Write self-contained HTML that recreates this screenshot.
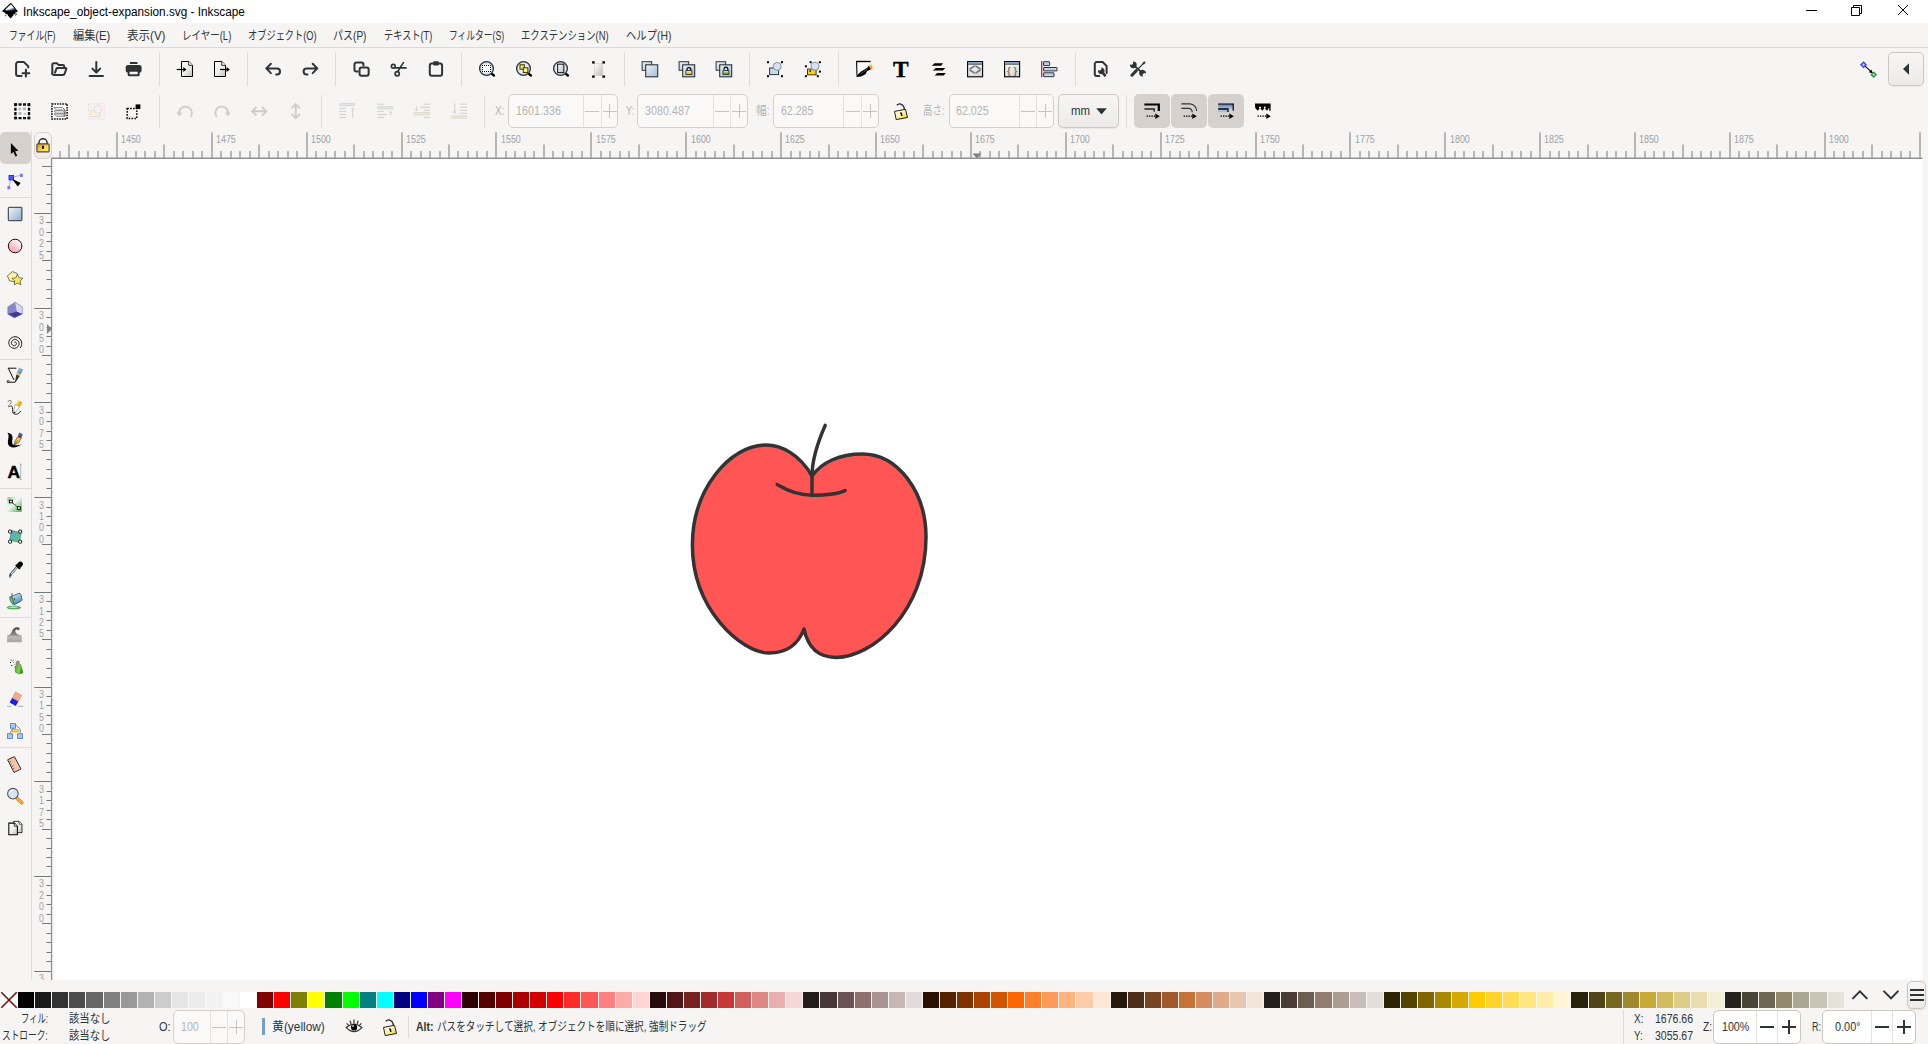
<!DOCTYPE html>
<html lang="ja"><head><meta charset="utf-8"><title>Inkscape_object-expansion.svg - Inkscape</title>
<style>
html,body{margin:0;padding:0}
body{width:1928px;height:1044px;overflow:hidden;position:relative;background:#f6f5f4;font-family:"Liberation Sans","Noto Sans CJK JP",sans-serif;font-size:12px;color:#2e3436}
body>div,body>span,body>svg{position:absolute}
.t{white-space:nowrap;transform-origin:0 50%;display:block}
.i{overflow:visible}
</style></head><body>
<div style="left:0.00px;top:0.00px;width:1928.00px;height:23.00px;background:#fff;"></div>
<svg class="i" style="left:1.90px;top:2.90px;" width="17" height="17" viewBox="0 0 18 18"><defs><linearGradient id="lg_ink" x1="0.35" y1="0.1" x2="0.75" y2="0.9"><stop offset="0" stop-color="#fff"/><stop offset="0.45" stop-color="#fff"/><stop offset="0.8" stop-color="#1d3a66"/><stop offset="1" stop-color="#000"/></linearGradient></defs><path d="M8.7 0.2 L0.4 8.3 Q-0.2 9.2 1.2 9.6 L3.6 10.2 Q2.2 11.2 4.4 11.7 L6.6 12.4 Q5.2 13.6 7.2 14.2 L8.6 15.9 Q9.1 16.4 9.7 15.9 L10.8 14.4 Q13 13.6 11.6 12.5 L13.2 11.9 Q15.4 11.2 13.8 10.2 L15.8 9.6 Q17.2 9.1 16.4 8.2 L9.9 0.3 Q9.2 -0.3 8.7 0.2Z" fill="#000"/><path d="M9.1 1.6 L3.3 7.2 L5.2 8.6 L6.6 7.6 L8 8.8 L9.6 7.7 L11.6 9.3 L15.2 8.1 L9.7 1.6Z" fill="url(#lg_ink)"/><ellipse cx="15" cy="11.6" rx="1.1" ry="0.55" fill="#000"/><ellipse cx="3.8" cy="13.6" rx="1" ry="0.5" fill="#000"/><ellipse cx="14.4" cy="13.5" rx="0.5" ry="0.45" fill="#000"/></svg>
<span class="t" id="t1" style="left:23.00px;top:2.80px;font-size:12px;line-height:18px;height:18px;color:#000;transform:scaleX(0.9808);">Inkscape_object-expansion.svg - Inkscape</span>
<svg class="i" style="left:1800px;top:0" width="128" height="23" viewBox="0 0 128 23"><path d="M6 10.5h11" stroke="#000" stroke-width="1" fill="none"/><path d="M51.5 7.5h8v8h-8z M53.5 7.5v-2h8v8h-2" stroke="#000" stroke-width="1" fill="none"/><path d="M98 5l10 10M108 5l-10 10" stroke="#000" stroke-width="1" fill="none"/></svg>
<div style="left:0.00px;top:47.00px;width:1928.00px;height:1.00px;background:#dcd9d6;"></div>
<span class="t" id="t2" style="left:8.80px;top:26.50px;font-size:12px;line-height:18px;height:18px;color:#2e3436;transform:scaleX(0.7343);">ファイル(F)</span>
<span class="t" id="t3" style="left:72.80px;top:26.50px;font-size:12px;line-height:18px;height:18px;color:#2e3436;transform:scaleX(0.9300);">編集(E)</span>
<span class="t" id="t4" style="left:126.80px;top:26.50px;font-size:12px;line-height:18px;height:18px;color:#2e3436;transform:scaleX(0.9600);">表示(V)</span>
<span class="t" id="t5" style="left:182.00px;top:26.50px;font-size:12px;line-height:18px;height:18px;color:#2e3436;transform:scaleX(0.7912);">レイヤー(L)</span>
<span class="t" id="t6" style="left:248.00px;top:26.50px;font-size:12px;line-height:18px;height:18px;color:#2e3436;transform:scaleX(0.7680);">オブジェクト(O)</span>
<span class="t" id="t7" style="left:333.30px;top:26.50px;font-size:12px;line-height:18px;height:18px;color:#2e3436;transform:scaleX(0.8350);">パス(P)</span>
<span class="t" id="t8" style="left:383.80px;top:26.50px;font-size:12px;line-height:18px;height:18px;color:#2e3436;transform:scaleX(0.7670);">テキスト(T)</span>
<span class="t" id="t9" style="left:449.20px;top:26.50px;font-size:12px;line-height:18px;height:18px;color:#2e3436;transform:scaleX(0.7286);">フィルター(S)</span>
<span class="t" id="t10" style="left:521.40px;top:26.50px;font-size:12px;line-height:18px;height:18px;color:#2e3436;transform:scaleX(0.7791);">エクステンション(N)</span>
<span class="t" id="t11" style="left:625.60px;top:26.50px;font-size:12px;line-height:18px;height:18px;color:#2e3436;transform:scaleX(0.8619);">ヘルプ(H)</span>
<svg class="i" style="left:15.00px;top:61.00px;" width="16" height="16" viewBox="0 0 16 16"><g fill="none" stroke="#2e3436" stroke-width="2" stroke-linecap="round" stroke-linejoin="round"><path d="M6.5 15H3.1a2 2 0 0 1-2-2V3.1a2 2 0 0 1 2-2H9L13.2 5.3V6.6"/><path d="M10.9 8.8V15.6M7.5 12.3h6.8"/></g></svg>
<svg class="i" style="left:51.50px;top:61.00px;" width="16" height="16" viewBox="0 0 16 16"><g fill="none" stroke="#2e3436" stroke-width="2" stroke-linecap="round" stroke-linejoin="round" stroke-width="1.9" transform="translate(-0.9 0)"><path d="M1.2 12.6V3.6a1.4 1.4 0 0 1 1.4-1.4h3.2l1.6 1.7h4.3a1.4 1.4 0 0 1 1.4 1.4V6"/><path d="M3.9 11.6l1.5-3.9a1 1 0 0 1 .95-.65h8a.85.85 0 0 1 .8 1.15l-1.7 4.75a1.6 1.6 0 0 1-1.5 1.05H2.7a1.5 1.5 0 0 1-1.5-1.5"/></g></svg>
<svg class="i" style="left:88.50px;top:61.00px;" width="16" height="16" viewBox="0 0 16 16"><g fill="none" stroke="#2e3436" stroke-width="2" stroke-linecap="round" stroke-linejoin="round" stroke-width="1.8"><path d="M7.3 0.9V11.2M3.4 7.6l3.9 3.9 3.9-3.9M0.6 15h13.4"/></g></svg>
<svg class="i" style="left:125.50px;top:61.00px;" width="16" height="16" viewBox="0 0 16 16"><g fill="#2e3436"><rect x="3.7" y="1.1" width="8" height="1.9" rx="0.9"/><rect x="-0.3" y="4" width="15.9" height="7.6" rx="2.2"/><rect x="1.7" y="9.5" width="12" height="5.8" rx="1.6"/><rect x="3.6" y="10.7" width="8.1" height="2.6" rx="0.3" fill="#f6f5f4"/></g></svg>
<div style="left:158.80px;top:52.00px;width:1.00px;height:34.00px;background:#dedbd8;"></div>
<svg class="i" style="left:177.00px;top:61.00px;" width="16" height="16" viewBox="0 0 16 16"><defs><linearGradient id="lg_doc" x1="0" y1="0" x2="1" y2="1"><stop offset="0" stop-color="#fff"/><stop offset="0.5" stop-color="#eeeeec"/><stop offset="1" stop-color="#c4c4bc"/></linearGradient></defs><path d="M4.5 0.5h7.3l3.7 3.7v11.3h-11z" fill="url(#lg_doc)" stroke="#000"/><path d="M11.7 0.6v3.7h3.7" fill="#fff" stroke="#000" stroke-width="0.8"/><path d="M-0.3 8.5H7" stroke="#000" stroke-width="1.2"/><path d="M6.3 6v5l3.2-2.5z" fill="#000"/></svg>
<svg class="i" style="left:214.00px;top:61.00px;" width="16" height="16" viewBox="0 0 16 16"><path d="M0.5 0.5h7.3l3.7 3.7v11.3h-11z" fill="url(#lg_doc)" stroke="#000"/><path d="M7.7 0.6v3.7h3.7" fill="#fff" stroke="#000" stroke-width="0.8"/><path d="M6 8.5H13.2" stroke="#000" stroke-width="1.2"/><path d="M12.6 6v5l3.3-2.5z" fill="#000"/></svg>
<div style="left:246.90px;top:52.00px;width:1.00px;height:34.00px;background:#dedbd8;"></div>
<svg class="i" style="left:265.00px;top:61.00px;" width="16" height="16" viewBox="0 0 16 16"><g fill="none" stroke="#2e3436" stroke-width="2" stroke-linecap="round" stroke-linejoin="round"><path d="M5.9 2.7L1.3 7.4l4.6 4.7M1.6 7.4H12a3 3 0 0 1 0 6h-.9"/></g></svg>
<svg class="i" style="left:302.30px;top:61.00px;" width="16" height="16" viewBox="0 0 16 16"><g fill="none" stroke="#2e3436" stroke-width="2" stroke-linecap="round" stroke-linejoin="round" transform="translate(-0.9 0)"><path d="M11.6 2.7l4.6 4.7-4.6 4.7M15.9 7.4H5.5a3 3 0 0 0 0 6h.9"/></g></svg>
<div style="left:335.30px;top:52.00px;width:1.00px;height:34.00px;background:#dedbd8;"></div>
<svg class="i" style="left:353.50px;top:61.00px;" width="16" height="16" viewBox="0 0 16 16"><g fill="none" stroke="#2e3436" stroke-width="2" stroke-linecap="round" stroke-linejoin="round" transform="translate(-0.85 0)"><path d="M10.3 4.6V3.4a2 2 0 0 0-2-2H3.3a2 2 0 0 0-2 2v5a2 2 0 0 0 2 2h1.2"/><rect x="6.4" y="6.5" width="9.1" height="8.2" rx="2"/></g></svg>
<svg class="i" style="left:390.50px;top:61.00px;" width="16" height="16" viewBox="0 0 16 16"><g fill="none" stroke="#2e3436" stroke-linecap="round" transform="translate(-0.9 0)"><circle cx="3.2" cy="5.3" r="1.9" stroke-width="1.7"/><circle cx="7.1" cy="12.7" r="2.1" stroke-width="1.7"/><path d="M4.8 6.9H16" stroke-width="1.6"/><path d="M7.6 10.5L13.3 1.6" stroke-width="1.6"/></g></svg>
<svg class="i" style="left:427.60px;top:61.00px;" width="16" height="16" viewBox="0 0 16 16"><g><rect x="1.8" y="2.4" width="12.3" height="12.3" rx="2" fill="none" stroke="#2e3436" stroke-width="2" stroke-linecap="round" stroke-linejoin="round"/><rect x="5" y="0.3" width="5.9" height="4.1" rx="1.1" fill="#2e3436"/></g></svg>
<div style="left:461.10px;top:52.00px;width:1.00px;height:34.00px;background:#dedbd8;"></div>
<svg class="i" style="left:479.00px;top:61.00px;" width="16" height="16" viewBox="0 0 16 16"><defs><radialGradient id="lg_lens" cx="0.5" cy="0.5" r="0.5"><stop offset="0" stop-color="#fff"/><stop offset="0.7" stop-color="#e4edf7"/><stop offset="1" stop-color="#a9c2df"/></radialGradient><linearGradient id="lg_gray" x1="0" y1="0" x2="1" y2="1"><stop offset="0" stop-color="#fff"/><stop offset="1" stop-color="#bdbdb8"/></linearGradient></defs><path d="M12.6 12.6l2.3 1.9" stroke="#000" stroke-width="2.4" stroke-linecap="round"/><circle cx="7.5" cy="7.5" r="6.9" fill="url(#lg_lens)" stroke="#2e3436" stroke-width="1.3"/><rect x="3" y="4" width="9" height="7" fill="#fff"/><path d="M3 4.500h9M3 10.500h9M3.500 4v7M11.500 4v7" stroke="#000" stroke-width="1" stroke-dasharray="1 1" fill="none"/></svg>
<svg class="i" style="left:516.00px;top:61.00px;" width="16" height="16" viewBox="0 0 16 16"><path d="M12.6 12.6l2.3 1.9" stroke="#000" stroke-width="2.4" stroke-linecap="round"/><circle cx="7.5" cy="7.5" r="6.9" fill="url(#lg_lens)" stroke="#2e3436" stroke-width="1.3"/><rect x="4" y="3.8" width="4.4" height="4.4" fill="#fce94f" stroke="#3c3000" stroke-width="1"/><rect x="7.3" y="6.8" width="4.6" height="4.8" fill="#fce94f" stroke="#3c3000" stroke-width="1"/><rect x="8.3" y="7.8" width="2" height="2.4" fill="#fff8b0"/></svg>
<svg class="i" style="left:553.00px;top:61.00px;" width="16" height="16" viewBox="0 0 16 16"><path d="M12.6 12.6l2.3 1.9" stroke="#000" stroke-width="2.4" stroke-linecap="round"/><circle cx="7.5" cy="7.5" r="6.9" fill="url(#lg_lens)" stroke="#2e3436" stroke-width="1.3"/><rect x="4.6" y="3.2" width="6.2" height="8.4" fill="url(#lg_gray)" stroke="#222" stroke-width="1.1"/></svg>
<svg class="i" style="left:590.50px;top:61.00px;" width="16" height="16" viewBox="0 0 16 16"><g transform="translate(-0.9 0)"><rect x="4.3" y="2.4" width="8.2" height="12.2" fill="url(#lg_gray)" stroke="#ccc" stroke-width="0.6"/><g fill="#111"><rect x="2" y="0.2" width="2.6" height="2.4"/><rect x="12.3" y="0.2" width="2.6" height="2.4"/><rect x="2" y="14.4" width="2.6" height="2.4"/><rect x="12.3" y="14.4" width="2.6" height="2.4"/></g></g></svg>
<div style="left:623.70px;top:52.00px;width:1.00px;height:34.00px;background:#dedbd8;"></div>
<svg class="i" style="left:641.60px;top:61.00px;" width="16" height="16" viewBox="0 0 16 16"><defs><linearGradient id="lg_blue" x1="0" y1="0" x2="1" y2="1"><stop offset="0" stop-color="#eef3fa"/><stop offset="1" stop-color="#a4bddb"/></linearGradient><linearGradient id="lg_gold" x1="0" y1="0" x2="0" y2="1"><stop offset="0" stop-color="#fff3a0"/><stop offset="1" stop-color="#f0a513"/></linearGradient><linearGradient id="lg_green" x1="0" y1="0" x2="0" y2="1"><stop offset="0" stop-color="#d8f0b0"/><stop offset="1" stop-color="#4e9a06"/></linearGradient></defs><rect x="0.1" y="0.7" width="9.6" height="8.6" fill="url(#lg_blue)" stroke="#2e3436"/><rect x="3.700" y="3.800" width="12" height="12" fill="url(#lg_blue)" stroke="#2e3436" stroke-width="1.1"/></svg>
<svg class="i" style="left:678.80px;top:61.00px;" width="16" height="16" viewBox="0 0 16 16"><rect x="0.1" y="0.7" width="9.6" height="8.6" fill="url(#lg_blue)" stroke="#2e3436"/><rect x="3.700" y="3.800" width="12" height="12" fill="url(#lg_blue)" stroke="#2e3436" stroke-width="1.1"/><path d="M8 10V8.6a1.9 1.9 0 0 1 3.8 0V10" fill="none" stroke="#000" stroke-width="1.2"/><rect x="6.9" y="9.6" width="6" height="3.8" fill="url(#lg_gold)" stroke="#222" stroke-width="0.8"/></svg>
<svg class="i" style="left:716.00px;top:61.00px;" width="16" height="16" viewBox="0 0 16 16"><rect x="0.1" y="0.7" width="9.6" height="8.6" fill="url(#lg_blue)" stroke="#2e3436"/><rect x="3.700" y="3.800" width="12" height="12" fill="url(#lg_blue)" stroke="#2e3436" stroke-width="1.1"/><path d="M8 8.800V8a1.9 1.9 0 0 1 3.8 0V10" fill="none" stroke="#000" stroke-width="1.2"/><rect x="6.9" y="9.6" width="6" height="3.8" fill="url(#lg_green)" stroke="#222" stroke-width="0.8"/></svg>
<div style="left:749.20px;top:52.00px;width:1.00px;height:34.00px;background:#dedbd8;"></div>
<svg class="i" style="left:767.00px;top:61.00px;" width="16" height="16" viewBox="0 0 16 16"><rect x="2.6" y="7" width="9" height="6.6" fill="#c9d9ec" stroke="#2e3436"/><circle cx="10.2" cy="5.4" r="4" fill="#d6e2f0" stroke="#7a8794" stroke-width="0.9"/><g fill="#000"><rect x="0.0" y="0.2" width="2" height="2"/><rect x="14.0" y="0.2" width="2" height="2"/><rect x="0.0" y="14.2" width="2" height="2"/><rect x="14.0" y="14.2" width="2" height="2"/></g></svg>
<svg class="i" style="left:804.50px;top:61.00px;" width="16" height="16" viewBox="0 0 16 16"><rect x="2.5" y="8" width="8.6" height="5.8" fill="#f5c938" stroke="#4a3b00"/><rect x="4.4" y="9.4" width="1.6" height="1.4" fill="#000"/><circle cx="10" cy="5.3" r="4" fill="#d6e2f0" stroke="#7a8794" stroke-width="0.9"/><g fill="#000"><rect x="-0.1" y="4.3" width="2" height="2"/><rect x="4.6" y="0.2" width="2" height="2"/><rect x="13.9" y="0.2" width="2" height="2"/><rect x="13.9" y="9.6" width="2" height="2"/><rect x="-0.1" y="14.2" width="2" height="2"/><rect x="11.8" y="14.2" width="2" height="2"/></g></svg>
<div style="left:837.90px;top:52.00px;width:1.00px;height:34.00px;background:#dedbd8;"></div>
<svg class="i" style="left:855.80px;top:61.00px;" width="16" height="16" viewBox="0 0 16 16"><defs><linearGradient id="lg_fs" x1="0" y1="0" x2="0" y2="1"><stop offset="0" stop-color="#fce94f"/><stop offset="1" stop-color="#f57900"/></linearGradient></defs><path d="M0.700 0.600H14L12 5 5 9.600 1 14.600z" fill="#fff"/><path d="M0 0.500H14.600" stroke="#000" stroke-width="1.400"/><path d="M0.600 0.300L1 14.800" stroke="#000" stroke-width="1.100"/><path d="M0 15.900L2.400 13 5.400 10.300 9 8.300 11.800 6.200 13 4.200 15 8.200 11.200 10 9.400 13.200 5 15.500z" fill="#000"/><path d="M4.600 13.200L11.400 8" stroke="#666" stroke-width="0.800"/><path d="M12.900 5L16.300 2.200V8.400L14.700 8.300z" fill="url(#lg_fs)"/></svg>
<svg class="i" style="left:892.70px;top:61.00px;" width="16" height="16" viewBox="0 0 16 16"><text x="7.900" y="15.700" text-anchor="middle" font-family="Liberation Serif,serif" font-weight="bold" font-size="23.400" fill="#000" stroke="#000" stroke-width="0.350">T</text></svg>
<svg class="i" style="left:930.00px;top:61.00px;" width="16" height="16" viewBox="0 0 16 16"><g fill="#000"><path d="M4.5 2.2h8.6l-2 2.6H1.8z"/><path d="M5.7 6.9h9.6l-2.4 2.6H2.8z"/><path d="M7.4 12h8.4l-2 2.6H4.6z"/></g></svg>
<svg class="i" style="left:967.00px;top:61.00px;" width="16" height="16" viewBox="0 0 16 16"><defs><linearGradient id="lg_win" x1="0" y1="0" x2="0.6" y2="1"><stop offset="0" stop-color="#fff"/><stop offset="1" stop-color="#d9d9d2"/></linearGradient></defs><rect x="0.6" y="0.6" width="15" height="15.2" fill="url(#lg_win)" stroke="#000" stroke-width="1.1"/><rect x="1.2" y="1.2" width="13.8" height="2" fill="#729fcf"/><path d="M1 3.4h14.4" stroke="#000" stroke-width="0.5"/><text x="8.1" y="13.2" text-anchor="middle" font-family="Liberation Sans,sans-serif" font-weight="bold" font-size="10.4" fill="#777" transform="matrix(1 0 0 1.5 0 -5.300)">&lt;&gt;</text></svg>
<svg class="i" style="left:1004.00px;top:61.00px;" width="16" height="16" viewBox="0 0 16 16"><rect x="0.6" y="0.6" width="15" height="15.2" fill="url(#lg_win)" stroke="#000" stroke-width="1.1"/><rect x="1.2" y="1.2" width="13.8" height="2" fill="#729fcf"/><path d="M1 3.4h14.4" stroke="#000" stroke-width="0.5"/><text x="8.1" y="12.6" text-anchor="middle" font-family="Liberation Sans,sans-serif" font-weight="bold" font-size="9.5" fill="#777">{ }</text></svg>
<svg class="i" style="left:1041.30px;top:61.00px;" width="16" height="16" viewBox="0 0 16 16"><path d="M0.7 0v16.2" stroke="#e01b24" stroke-width="1.3"/><rect x="2.6" y="0.7" width="6" height="3.9" rx="0.3" fill="#bcd2ec" stroke="#2e3436" stroke-width="1"/><rect x="2.6" y="6.5" width="13.4" height="3.4" rx="0.3" fill="#bcd2ec" stroke="#2e3436" stroke-width="1"/><rect x="2.6" y="11.8" width="10.4" height="3.9" rx="0.3" fill="#bcd2ec" stroke="#2e3436" stroke-width="1"/></svg>
<div style="left:1074.60px;top:52.00px;width:1.00px;height:34.00px;background:#dedbd8;"></div>
<svg class="i" style="left:1092.60px;top:61.00px;" width="16" height="16" viewBox="0 0 16 16"><g fill="none" stroke="#2e3436" stroke-width="2" stroke-linecap="round" stroke-linejoin="round" transform="translate(-0.4 0)"><path d="M6.6 15H4.2a2 2 0 0 1-2-2V3a2 2 0 0 1 2-2H10L14 5v7"/><path d="M10.300 12L13 15.200" stroke-width="2.700" stroke-linecap="butt"/><path d="M8.19 6.60A3.30 3.30 0 1 1 5.24 8.67A1.80 1.80 0 0 0 8.19 6.60Z" transform="translate(0.4 0)" fill="#2e3436" stroke="none"/></g></svg>
<svg class="i" style="left:1129.80px;top:61.00px;" width="16" height="16" viewBox="0 0 16 16"><g fill="none" stroke="#2e3436" stroke-linecap="round"><path d="M14 1.800L8 8" stroke-width="1.100"/><ellipse cx="13.900" cy="2" rx="1.800" ry="1.200" transform="rotate(-45 13.900 2)" fill="#2e3436" stroke="none"/><path d="M6.300 9.600L1.900 14.200" stroke-width="3"/><path d="M5 5.400L10.800 10.600" stroke-width="1.900" stroke-linecap="butt"/></g><path d="M2.65 0.46A3.40 3.40 0 1 1 -0.04 3.15A1.90 1.90 0 0 0 2.65 0.46Z" fill="#2e3436"/><path d="M13.15 15.44A3.40 3.40 0 1 1 15.84 12.75A1.90 1.90 0 0 0 13.15 15.44Z" fill="#2e3436"/></svg>
<svg class="i" style="left:1859.90px;top:60.50px;" width="16" height="16" viewBox="0 0 16 16"><path d="M4 4.2l8.6 7.6" stroke="#000" stroke-width="1.1"/><path d="M12.4 12.2l-3.6-1 2.6-2.8z" fill="#000"/><rect x="1.7" y="1.9" width="3.6" height="3.6" transform="rotate(45 3.5 3.7)" fill="#c8c8ff" stroke="#4040ff" stroke-width="1.4"/><rect x="12" y="12" width="3.4" height="3.4" transform="rotate(45 13.7 13.7)" fill="#c8c8ff" stroke="#2e9a2e" stroke-width="1.4"/></svg>
<div style="left:1887.80px;top:51.90px;width:35.80px;height:33.80px;border:1px solid #cdc7c2;border-radius:5px;box-sizing:border-box;background:linear-gradient(#f7f6f5,#edebe9);box-shadow:0 1px 1px rgba(0,0,0,.06);"></div>
<svg class="i" style="left:1902px;top:63px" width="8" height="12" viewBox="0 0 8 12"><path d="M7 0.3v11.4L1 6z" fill="#2e3436"/></svg>
<svg class="i" style="left:13.60px;top:103.00px;" width="16" height="16" viewBox="0 0 16 16"><rect x="0.4" y="0.4" width="15.6" height="15.800" fill="#fff"/><g stroke="#111" stroke-width="2.400" stroke-dasharray="3 1.330 3.100 1.330 3.100 1.330 3 50" fill="none"><path d="M0.200 1.500H16.200"/><path d="M0.200 15.100H16.200"/><path d="M1.400 0.300V16.300"/><path d="M15 0.300V16.300"/></g><g fill="#b9b9b9"><rect x="4.4" y="4.6" width="2.8" height="2.6"/><rect x="8.8" y="4.4" width="3.2" height="3"/><rect x="4.4" y="9" width="3.2" height="3"/><rect x="9.6" y="9.8" width="2.2" height="2"/></g></svg>
<svg class="i" style="left:50.50px;top:103.00px;" width="16" height="16" viewBox="0 0 16 16"><rect x="0.9" y="0.9" width="15.2" height="15" fill="#fff" stroke="#111" stroke-width="1.5" stroke-dasharray="1.6 1"/><g stroke="#555" stroke-width="0.7" fill="#eee"><path d="M3 10.8h8.6l2.4 2.4H5.4z"/><path d="M3 7.8h8.6l2.4 2.4H5.4z" fill="#fff"/><path d="M3 4.6h8.6l2.4 2.4H5.4z" fill="#fff"/><path d="M14 7v6.2" stroke="#444" stroke-width="1"/></g></svg>
<svg class="i" style="left:87.50px;top:103.00px;" width="16" height="16" viewBox="0 0 16 16"><rect x="0.8" y="0.8" width="15.4" height="15.2" fill="none" stroke="#f6c6c6" stroke-width="1" stroke-dasharray="1 1.4"/><rect x="3" y="7" width="9" height="6.6" fill="#fbf3d3" stroke="#dddddb"/><circle cx="10" cy="6.2" r="4" fill="#f0f2f5" stroke="#dcdcda" stroke-width="0.9"/></svg>
<svg class="i" style="left:124.70px;top:103.00px;" width="16" height="16" viewBox="0 0 16 16"><rect x="2.2" y="5.4" width="9.6" height="10" fill="none" stroke="#111" stroke-width="1.5" stroke-dasharray="1.7 1.2"/><rect x="10.6" y="1.4" width="4.8" height="4.6" fill="#000"/></svg>
<div style="left:158.80px;top:94.50px;width:1.00px;height:33.50px;background:#dedbd8;"></div>
<svg class="i" style="left:176.60px;top:103.00px;" width="16" height="16" viewBox="0 0 16 16"><g fill="none" stroke="#cdcdcc" stroke-width="1.9"><path d="M2.100 10A6.400 6.400 0 1 1 13.600 13.900"/></g><path d="M-0.600 9.600h6l-3 3.700z" fill="#cdcdcc"/></svg>
<svg class="i" style="left:213.60px;top:103.00px;" width="16" height="16" viewBox="0 0 16 16"><g fill="none" stroke="#cdcdcc" stroke-width="1.9"><path d="M14.100 10A6.400 6.400 0 1 0 2.600 13.900"/></g><path d="M16.800 9.600h-6l3 3.700z" fill="#cdcdcc"/></svg>
<svg class="i" style="left:251.00px;top:103.00px;" width="16" height="16" viewBox="0 0 16 16"><g fill="none" stroke="#cdcdcc" stroke-width="1.9"><path d="M1.4 8.3h13.6M5.4 4L1.2 8.3l4.2 4.3M11 4l4.2 4.3-4.2 4.3"/></g></svg>
<svg class="i" style="left:288.30px;top:103.00px;" width="16" height="16" viewBox="0 0 16 16"><g fill="none" stroke="#cdcdcc" stroke-width="1.9"><path d="M7.7 1.4V15M3.5 5.4l4.2-4.2 4.2 4.2M3.5 11l4.2 4.2 4.2-4.2"/></g></svg>
<div style="left:320.80px;top:94.50px;width:1.00px;height:33.50px;background:#dedbd8;"></div>
<svg class="i" style="left:339.40px;top:103.00px;" width="16" height="16" viewBox="0 0 16 16"><rect x="0.4" y="0.5" width="15.4" height="2.2" rx="0.6" fill="#dfe6ee" stroke="#d4d4d2" stroke-width="0.8"/><path d="M0.3 5.4H7" stroke="#d4d4d2" stroke-width="1.2"/><path d="M0.3 8.4H7" stroke="#d4d4d2" stroke-width="1.2"/><path d="M0.3 11.5H7" stroke="#d4d4d2" stroke-width="1.2"/><path d="M0.3 14.5H7" stroke="#d4d4d2" stroke-width="1.2"/><path d="M13.6 6V15" stroke="#d4d4d2" stroke-width="1.2"/><path d="M11.6 6.6h4l-2-2.2z" fill="#d4d4d2"/></svg>
<svg class="i" style="left:376.50px;top:103.00px;" width="16" height="16" viewBox="0 0 16 16"><path d="M0.3 1.2H6.8" stroke="#d4d4d2" stroke-width="1.2"/><rect x="0.5" y="3.6" width="15.4" height="2.2" rx="0.6" fill="#dfe6ee" stroke="#d4d4d2" stroke-width="0.8"/><path d="M0.3 8.4H6.8" stroke="#d4d4d2" stroke-width="1.2"/><path d="M0.3 14.5H6.8" stroke="#d4d4d2" stroke-width="1.2"/><path d="M0.3 11.5H10" stroke="#d4d4d2" stroke-width="1.2"/><path d="M13.7 9v3.6" stroke="#d4d4d2" stroke-width="1.2"/><path d="M11.8 9.8h3.8l-1.9-2z" fill="#d4d4d2"/></svg>
<svg class="i" style="left:413.80px;top:103.00px;" width="16" height="16" viewBox="0 0 16 16"><path d="M9.4 1.2H16" stroke="#d4d4d2" stroke-width="1.2"/><path d="M9.4 7.4H16" stroke="#d4d4d2" stroke-width="1.2"/><path d="M9.4 14.5H16" stroke="#d4d4d2" stroke-width="1.2"/><path d="M6.2 4.3H16" stroke="#d4d4d2" stroke-width="1.2"/><rect x="0.4" y="9.5" width="15.4" height="2.4" rx="0.6" fill="#f3ead2" stroke="#d4d4d2" stroke-width="0.8"/><path d="M2.5 3.4v3.6" stroke="#d4d4d2" stroke-width="1.2"/><path d="M0.6 6.2h3.8l-1.9 2z" fill="#d4d4d2"/></svg>
<svg class="i" style="left:450.80px;top:103.00px;" width="16" height="16" viewBox="0 0 16 16"><path d="M9.2 1.2H16" stroke="#d4d4d2" stroke-width="1.2"/><path d="M9.2 4.3H16" stroke="#d4d4d2" stroke-width="1.2"/><path d="M9.2 7.4H16" stroke="#d4d4d2" stroke-width="1.2"/><path d="M9.2 10.4H16" stroke="#d4d4d2" stroke-width="1.2"/><rect x="0.4" y="12.8" width="15.4" height="2.4" rx="0.6" fill="#f3ead2" stroke="#d4d4d2" stroke-width="0.8"/><path d="M3.7 0.3V9" stroke="#d4d4d2" stroke-width="1.2"/><path d="M1.7 8.4h4l-2 2.4z" fill="#d4d4d2"/></svg>
<div style="left:484.10px;top:94.50px;width:1.00px;height:33.50px;background:#dedbd8;"></div>
<span class="t" id="t12" style="left:494.90px;top:102.00px;font-size:12px;line-height:18px;height:18px;color:#b4b5b4;transform:scaleX(0.8463);">X:</span>
<div style="left:507.90px;top:94.10px;width:110.60px;height:34.00px;border:1px solid #d5d0cc;border-radius:5px;box-sizing:border-box;background:#faf9f8;"></div>
<div style="left:583.20px;top:95.10px;width:1.00px;height:32.00px;background:#e3e0dd;"></div>
<div style="left:600.60px;top:95.10px;width:1.00px;height:32.00px;background:#e3e0dd;"></div>
<div style="left:585.40px;top:110.60px;width:14.00px;height:1.00px;background:#c3c4c3;"></div>
<div style="left:602.80px;top:110.60px;width:14.00px;height:1.00px;background:#c3c4c3;"></div>
<div style="left:609.30px;top:104.10px;width:1.00px;height:14.00px;background:#c3c4c3;"></div>
<span class="t" id="t13" style="left:515.60px;top:102.00px;font-size:12px;line-height:18px;height:18px;color:#b4b5b4;transform:scaleX(0.8969);">1601.336</span>
<span class="t" id="t14" style="left:626.00px;top:102.00px;font-size:12px;line-height:18px;height:18px;color:#b4b5b4;transform:scaleX(0.7485);">Y:</span>
<div style="left:637.30px;top:94.10px;width:110.50px;height:34.00px;border:1px solid #d5d0cc;border-radius:5px;box-sizing:border-box;background:#faf9f8;"></div>
<div style="left:713.10px;top:95.10px;width:1.00px;height:32.00px;background:#e3e0dd;"></div>
<div style="left:729.70px;top:95.10px;width:1.00px;height:32.00px;background:#e3e0dd;"></div>
<div style="left:714.90px;top:110.60px;width:14.00px;height:1.00px;background:#c3c4c3;"></div>
<div style="left:732.00px;top:110.60px;width:14.00px;height:1.00px;background:#c3c4c3;"></div>
<div style="left:738.50px;top:104.10px;width:1.00px;height:14.00px;background:#c3c4c3;"></div>
<span class="t" id="t15" style="left:645.10px;top:102.00px;font-size:12px;line-height:18px;height:18px;color:#b4b5b4;transform:scaleX(0.8969);">3080.487</span>
<span class="t" id="t16" style="left:755.80px;top:102.00px;font-size:12px;line-height:18px;height:18px;color:#b4b5b4;transform:scaleX(0.8994);">幅:</span>
<div style="left:772.90px;top:94.10px;width:106.00px;height:34.00px;border:1px solid #d5d0cc;border-radius:5px;box-sizing:border-box;background:#faf9f8;"></div>
<div style="left:843.30px;top:95.10px;width:1.00px;height:32.00px;background:#e3e0dd;"></div>
<div style="left:860.70px;top:95.10px;width:1.00px;height:32.00px;background:#e3e0dd;"></div>
<div style="left:845.50px;top:110.60px;width:14.00px;height:1.00px;background:#c3c4c3;"></div>
<div style="left:863.05px;top:110.60px;width:14.00px;height:1.00px;background:#c3c4c3;"></div>
<div style="left:869.55px;top:104.10px;width:1.00px;height:14.00px;background:#c3c4c3;"></div>
<span class="t" id="t17" style="left:780.70px;top:102.00px;font-size:12px;line-height:18px;height:18px;color:#b4b5b4;transform:scaleX(0.8800);">62.285</span>
<svg class="i" style="left:893.00px;top:103.30px;" width="16" height="16" viewBox="0 0 16 16"><defs><linearGradient id="lg_lk" x1="0" y1="0" x2="1" y2="1"><stop offset="0" stop-color="#fff"/><stop offset="0.45" stop-color="#fdf6b0"/><stop offset="1" stop-color="#e8c430"/></linearGradient></defs><path d="M3.800 2.300C6 0 9.800 0.600 11 4.400l0.400 2" fill="none" stroke="#222" stroke-width="1.3"/><path d="M1.500 8.400L12.500 6.300l2 8.200L3.200 16.600z" fill="url(#lg_lk)" stroke="#222" stroke-width="1"/><path d="M7.100 9.600a1.2 1.2 0 0 1 2 .9l.4 2.2-1.4.2-.4-2a1.2 1.2 0 0 1-.6-1.3z" fill="#000"/></svg>
<span class="t" id="t18" style="left:923.40px;top:102.00px;font-size:12px;line-height:18px;height:18px;color:#b4b5b4;transform:scaleX(0.7899);">高さ:</span>
<div style="left:948.90px;top:94.10px;width:104.90px;height:34.00px;border:1px solid #d5d0cc;border-radius:5px;box-sizing:border-box;background:#faf9f8;"></div>
<div style="left:1018.70px;top:95.10px;width:1.00px;height:32.00px;background:#e3e0dd;"></div>
<div style="left:1036.10px;top:95.10px;width:1.00px;height:32.00px;background:#e3e0dd;"></div>
<div style="left:1020.90px;top:110.60px;width:14.00px;height:1.00px;background:#c3c4c3;"></div>
<div style="left:1038.20px;top:110.60px;width:14.00px;height:1.00px;background:#c3c4c3;"></div>
<div style="left:1044.70px;top:104.10px;width:1.00px;height:14.00px;background:#c3c4c3;"></div>
<span class="t" id="t19" style="left:956.30px;top:102.00px;font-size:12px;line-height:18px;height:18px;color:#b4b5b4;transform:scaleX(0.8909);">62.025</span>
<div style="left:1058.10px;top:94.00px;width:60.80px;height:34.20px;border:1px solid #cdc7c2;border-radius:5px;box-sizing:border-box;background:linear-gradient(#f7f6f5,#edebe9);box-shadow:0 1px 1px rgba(0,0,0,.06);"></div>
<span class="t" id="t20" style="left:1070.70px;top:102.00px;font-size:12px;line-height:18px;height:18px;color:#2e3436;transform:scaleX(0.9550);">mm</span>
<svg class="i" style="left:1095.5px;top:108px" width="11" height="7" viewBox="0 0 11 7"><path d="M0.2 0.3h10.6L5.5 6.5z" fill="#2e3436"/></svg>
<div style="left:1125.80px;top:94.50px;width:1.00px;height:33.50px;background:#dedbd8;"></div>
<div style="left:1134.00px;top:94.10px;width:35.50px;height:34.00px;background:#d6d1cd;border-radius:5px;"></div>
<svg class="i" style="left:1143.75px;top:103.00px;" width="16" height="16" viewBox="0 0 16 16"><path d="M0.4 1.5H14.8V8" fill="none" stroke="#000" stroke-width="2.2"/><path d="M0.4 6H10.2V8.8" fill="none" stroke="#222" stroke-width="1.3"/><path d="M2.6 13.2h8.6" stroke="#000" stroke-width="1.3" stroke-dasharray="1.4 1"/><path d="M11.3 10.4v5.6l4.5-2.8z" fill="#000"/></svg>
<div style="left:1171.00px;top:94.10px;width:35.50px;height:34.00px;background:#d6d1cd;border-radius:5px;"></div>
<svg class="i" style="left:1180.75px;top:103.00px;" width="16" height="16" viewBox="0 0 16 16"><g fill="none" stroke="#333" stroke-width="1.2"><path d="M0.3 0.9H9a7 7 0 0 1 6.6 7.1"/><path d="M0.3 5.4H7.3a4 4 0 0 1 3.9 3.8"/></g><path d="M2.6 13.2h8.6" stroke="#000" stroke-width="1.3" stroke-dasharray="1.4 1"/><path d="M11.3 10.4v5.6l4.5-2.8z" fill="#000"/></svg>
<div style="left:1208.00px;top:94.10px;width:35.80px;height:34.00px;background:#d6d1cd;border-radius:5px;"></div>
<svg class="i" style="left:1217.90px;top:103.00px;" width="16" height="16" viewBox="0 0 16 16"><defs><linearGradient id="lg_trg" x1="0" y1="0" x2="0" y2="1"><stop offset="0" stop-color="#5a7fb0"/><stop offset="1" stop-color="#cfdff1"/></linearGradient></defs><path d="M0.2 1H15V7.6H10.4V5.8H0.2z" fill="url(#lg_trg)"/><path d="M0.2 6.2H9.6V9H0.2z" fill="#9fc0e6"/><path d="M0.2 1H15.2V7.8" fill="none" stroke="#000" stroke-width="1.2"/><path d="M0.2 6H10V9" fill="none" stroke="#000" stroke-width="1.3"/><path d="M2.6 13.2h8.6" stroke="#000" stroke-width="1.3" stroke-dasharray="1.4 1"/><path d="M11.3 10.4v5.6l4.5-2.8z" fill="#000"/></svg>
<svg class="i" style="left:1255.40px;top:103.00px;" width="16" height="16" viewBox="0 0 16 16"><path d="M0 0.6H15.6V7.8H14.2V4.4L12 7.8 9.6 5 7.4 7.8 5 5 2.8 7.8 0.2 5z" fill="#000"/><circle cx="5" cy="4.4" r="1" fill="#fff"/><circle cx="9.7" cy="4.4" r="1" fill="#fff"/><path d="M2.6 13.2h8.6" stroke="#000" stroke-width="1.3" stroke-dasharray="1.4 1"/><path d="M11.3 10.4v5.6l4.5-2.8z" fill="#000"/></svg>
<div style="left:31.00px;top:131.00px;width:1.00px;height:849.00px;background:#dedbd8;"></div>
<div style="left:0.00px;top:132.40px;width:30.50px;height:31.70px;background:#d6d1cd;border-radius:5px;"></div>
<svg class="i" style="left:7.00px;top:140.50px;" width="16" height="16" viewBox="0 0 16 16"><path d="M3.9 1.9v11.2l2.5-2.2 2.1 4.7 1.7-.8-2.1-4.6 3.2-.4z" fill="#000"/></svg>
<svg class="i" style="left:7.00px;top:173.00px;" width="16" height="16" viewBox="0 0 16 16"><path d="M4 4.6L14 2.2M4 4.6L2 14.4" stroke="#999" stroke-width="0.7" fill="none"/><path d="M4.6 5.4l9 4.6-2.8 3.6z" fill="#000"/><rect x="2" y="2.4" width="4.6" height="4.6" fill="#5555ff" stroke="#1a1aff" stroke-width="0.8"/><rect x="13" y="0.7" width="2.8" height="3.2" fill="#7777ff"/><rect x="0.4" y="13" width="2.8" height="3.2" fill="#7777ff"/></svg>
<div style="left:0.00px;top:197.00px;width:31.00px;height:1.00px;background:#dedbd8;"></div>
<svg class="i" style="left:7.00px;top:206.00px;" width="16" height="16" viewBox="0 0 16 16"><defs><linearGradient id="lg_tr" x1="0" y1="0" x2="1" y2="1"><stop offset="0" stop-color="#f4f7fb"/><stop offset="1" stop-color="#8fabcf"/></linearGradient></defs><rect x="1.3" y="1.3" width="13.6" height="13.4" rx="0.5" fill="url(#lg_tr)" stroke="#2e3436" stroke-width="1"/></svg>
<svg class="i" style="left:7.00px;top:238.00px;" width="16" height="16" viewBox="0 0 16 16"><defs><linearGradient id="lg_tc" x1="0.8" y1="0.1" x2="0.2" y2="0.9"><stop offset="0" stop-color="#fff"/><stop offset="1" stop-color="#ff9aa8"/></linearGradient></defs><circle cx="8.1" cy="8" r="6.8" fill="url(#lg_tc)" stroke="#111" stroke-width="1"/></svg>
<svg class="i" style="left:7.00px;top:270.50px;" width="16" height="16" viewBox="0 0 16 16"><path d="M5.4 0.6l4.6 1.8 1 4.4-3.2 3.8-5-.6L0.3 5z" fill="#fdf3a2" stroke="#555" stroke-width="0.8"/><path d="M10.6 3.4l1.6 3.4 3.7.5-2.7 2.7.7 3.8-3.4-1.8-3.4 1.8.7-3.8L5 7.3l3.8-.5z" fill="#fce94f" stroke="#555" stroke-width="0.8"/></svg>
<svg class="i" style="left:7.00px;top:301.70px;" width="16" height="16" viewBox="0 0 16 16"><path d="M8.100 0.200L15.300 4.900V12.100L7.500 15.800 0.800 12.100V4.900z" fill="#8686c8"/><path d="M8.100 0.200L15.300 4.900V12.100L9.900 9.800z" fill="#d9d9f3"/><path d="M0.800 12.100L9.900 9.800 15.300 12.100 7.500 15.800z" fill="#3c3c8e"/><path d="M8.100 0.200L15.300 4.900V12.100L7.500 15.800 0.800 12.100V4.900z" fill="none" stroke="#6a6ab0" stroke-width="0.5"/></svg>
<svg class="i" style="left:7.00px;top:335.00px;" width="16" height="16" viewBox="0 0 16 16"><path d="M7.12 7.44L7.23 7.30L7.38 7.18L7.55 7.08L7.75 7.02L7.97 6.99L8.20 7.01L8.44 7.07L8.67 7.18L8.89 7.34L9.08 7.54L9.24 7.78L9.36 8.06L9.43 8.37L9.44 8.70L9.40 9.04L9.29 9.37L9.12 9.69L8.88 9.99L8.59 10.25L8.25 10.45L7.86 10.60L7.44 10.68L7.01 10.69L6.56 10.62L6.13 10.47L5.71 10.24L5.34 9.93L5.01 9.55L4.75 9.12L4.56 8.63L4.46 8.10L4.45 7.55L4.54 7.00L4.73 6.46L5.01 5.95L5.39 5.49L5.85 5.09L6.38 4.77L6.97 4.54L7.60 4.41L8.26 4.40L8.92 4.49L9.57 4.71L10.18 5.04L10.73 5.48L11.21 6.01L11.60 6.63L11.88 7.32L12.04 8.06L12.07 8.83L11.96 9.60L11.73 10.36L11.36 11.07L10.86 11.72L10.25 12.29L9.55 12.74L8.76 13.08L7.92 13.28L7.04 13.33L6.16 13.23L5.29 12.98L4.47 12.57L3.72 12.03L3.07 11.35L2.53 10.56L2.13 9.69L1.89 8.74L1.81 7.75L1.90 6.76L2.16 5.78L2.59 4.85L3.18 3.99L3.92 3.24L4.78 2.63L5.75 2.16L6.80 1.86L7.89 1.75L9.00 1.82L10.10 2.08L11.14 2.54L12.10 3.17L12.95 3.96L13.65 4.90L14.19 5.95L14.55 7.10L14.71 8.30L14.66 9.52L14.40 10.73L13.93 11.89L13.27 12.96" fill="none" stroke="#111" stroke-width="1"/></svg>
<div style="left:0.00px;top:358.50px;width:31.00px;height:1.00px;background:#dedbd8;"></div>
<svg class="i" style="left:7.00px;top:367.00px;" width="16" height="16" viewBox="0 0 16 16"><defs><linearGradient id="lg_pb" x1="0" y1="0" x2="1" y2="1"><stop offset="0" stop-color="#b8dcf0"/><stop offset="1" stop-color="#2a6eae"/></linearGradient></defs><path d="M0.8 1.2H9.4M1.4 1.4L7 13M0.3 15.2H8.2Q9.4 13 11 10.800" fill="none" stroke="#111" stroke-width="1"/><rect x="0.2" y="13.8" width="1.8" height="1.8" fill="#fff" stroke="#111" stroke-width="0.7"/><path d="M11.8 0.4l4.2 2.200-2.400 5-3.800-1.800z" fill="url(#lg_pb)"/><path d="M9.800 5.800l3.800 1.800-.8 1.400-3.400-1.600z" fill="#f5c211"/><path d="M9.400 7.400l3.400 1.600-3.600 4.600-1.200 1z" fill="#2e3436"/></svg>
<svg class="i" style="left:7.00px;top:399.50px;" width="16" height="16" viewBox="0 0 16 16"><path d="M0.900 2.200C1.200 0 4.400 -0.200 4.300 1.900C4.200 3.800 1.300 5 1.500 6.800L4.600 5.800" fill="none" stroke="#555" stroke-width="0.800"/><path d="M4.400 5.800c2.400 1.600.2 5.800 2 7.600 1.600 1.600 5 1.200 7.400-2.400" fill="none" stroke="#222" stroke-width="1"/><path d="M11.200 -0.300l4 2.700-2.600 4.400-4.200-2.500z" fill="#fbe54a"/><path d="M13 0.900l2.200 1.500-2.600 4.400-2-1.200z" fill="#f5a010"/><path d="M8.400 4.300l4.200 2.500-3.400 4.600-2.200 2.400-.2-3.200z" fill="#fff" stroke="#666" stroke-width="0.500"/><path d="M7 13.800l-.1-2.400 1.700 1z" fill="#111"/></svg>
<svg class="i" style="left:7.00px;top:431.50px;" width="16" height="16" viewBox="0 0 16 16"><path d="M0.400 0.800c4.200.4 5.600 3 5 6.600-.5 2.700-.6 4.800 1.400 5.600 2.800.9 5.400-.6 8.600-.6-3.200.6-5 3.200-8.800 3C2.200 15.200.3 12.400 1 8.400 1.600 5 2.200 2.600.4.800z" fill="#000"/><path d="M12.200 0.600l3.600 1.600-1.200 3-3.600-1.600z" fill="#3465a4"/><path d="M11.600 3.400l3.200 1.400-.6 1.400-3.200-1.400z" fill="#cc0000"/><path d="M10.800 4.800l3.400 1.500-2.600 4.500-4.600 2.200 1.200-4.400z" fill="#f3c44a" stroke="#333" stroke-width="0.6"/><path d="M7 13l3.600-4.600" stroke="#333" stroke-width="0.6"/></svg>
<svg class="i" style="left:7.00px;top:464.00px;" width="16" height="16" viewBox="0 0 16 16"><text x="0.5" y="13.800" font-family="Liberation Sans,sans-serif" font-weight="bold" font-size="17.4" fill="#000" stroke="#000" stroke-width="0.4">A</text><path d="M12.600 0.200h2.200M13.700 0.200V15.600M12.600 15.600h2.200" stroke="#888" stroke-width="0.6" fill="none"/></svg>
<div style="left:0.00px;top:487.50px;width:31.00px;height:1.00px;background:#dedbd8;"></div>
<svg class="i" style="left:7.00px;top:496.50px;" width="16" height="16" viewBox="0 0 16 16"><defs><linearGradient id="lg_tg" x1="0" y1="0" x2="1" y2="1"><stop offset="0" stop-color="#6cc56c"/><stop offset="0.22" stop-color="#c9ecc9"/><stop offset="0.42" stop-color="#f2fbf2"/><stop offset="1" stop-color="#43a843"/></linearGradient></defs><rect x="0.400" y="0.300" width="14.500" height="14.600" rx="0.800" fill="url(#lg_tg)"/><path d="M3.800 4.400L11.800 11" stroke="#333" stroke-width="0.900"/><rect x="2.400" y="3.200" width="3" height="2.600" fill="#fff" stroke="#111" stroke-width="1"/><rect x="10.400" y="9.800" width="3" height="2.600" fill="#fff" stroke="#111" stroke-width="1"/></svg>
<svg class="i" style="left:7.00px;top:528.00px;" width="16" height="16" viewBox="0 0 16 16"><defs><linearGradient id="lg_tm" x1="0" y1="0" x2="1" y2="1"><stop offset="0" stop-color="#5fa2d6"/><stop offset="1" stop-color="#5ccc72"/></linearGradient></defs><path d="M4.600 2.500L14.300 4.600 12.200 14.300 2.500 12.300z" fill="url(#lg_tm)" stroke="#2f6a5a" stroke-width="0.500"/><g fill="#fff" stroke="#111" stroke-width="1"><rect x="1.600" y="2.100" width="3" height="3" rx="0.900"/><rect x="11.700" y="2.100" width="3" height="3" rx="0.900"/><rect x="1.600" y="12.200" width="3" height="3" rx="0.900"/><rect x="11.700" y="12.200" width="3" height="3" rx="0.900"/></g></svg>
<svg class="i" style="left:7.00px;top:561.00px;" width="16" height="16" viewBox="0 0 16 16"><path d="M10.400 5.600L3.800 13.200 3.200 15" stroke="#444" stroke-width="2.300" fill="none" stroke-linecap="round"/><path d="M10.200 6L4 13.200" stroke="#d4e4f4" stroke-width="1.100" fill="none"/><path d="M9.400 4.400l3 3" stroke="#000" stroke-width="2" stroke-linecap="round"/><path d="M11.400 1.400c1.200-1.200 3-1 3.900 0 .9 1 .8 2.600-.2 3.600l-2 2-3.600-3.600z" fill="#000"/><path d="M2.800 15.200a.9.900 0 1 0 .1 0z" fill="#7ab0e0"/></svg>
<svg class="i" style="left:7.00px;top:593.00px;" width="16" height="16" viewBox="0 0 16 16"><defs><linearGradient id="lg_bk" x1="0.3" y1="0" x2="0.6" y2="1"><stop offset="0" stop-color="#c4e8ee"/><stop offset="1" stop-color="#3f7db3"/></linearGradient><radialGradient id="lg_pd" cx="0.45" cy="0.4" r="0.6"><stop offset="0" stop-color="#e6f7e6"/><stop offset="0.5" stop-color="#7fcf86"/><stop offset="1" stop-color="#3f9a4c"/></radialGradient></defs><ellipse cx="6.900" cy="14.600" rx="6.900" ry="1.500" fill="url(#lg_pd)" stroke="#3a7a44" stroke-width="0.500"/><path d="M4.600 10.600L5.200 14.400 5.900 14.400 5.800 10.800z" fill="#9fdc9f"/><path d="M4.700 3.200L12 0.300Q13.600 0.400 14.200 2.200L15.100 6.600Q15 7.600 13.800 8.200L6.900 11.900Q5.600 9 4.700 3.200z" fill="url(#lg_bk)" stroke="#2a3f55" stroke-width="0.700"/><ellipse cx="4.600" cy="7.200" rx="1.300" ry="3.700" transform="rotate(-22 4.600 7.200)" fill="#6cc870" stroke="#2a5a3a" stroke-width="0.700"/><path d="M4.900 0.200V4.200" stroke="#666" stroke-width="1.100"/><ellipse cx="7.500" cy="6.300" rx="0.500" ry="1" fill="#333"/></svg>
<div style="left:0.00px;top:617.00px;width:31.00px;height:1.00px;background:#dedbd8;"></div>
<svg class="i" style="left:7.00px;top:626.00px;" width="16" height="16" viewBox="0 0 16 16"><defs><linearGradient id="lg_tw" x1="0" y1="0" x2="0" y2="1"><stop offset="0" stop-color="#4a4a4a"/><stop offset="0.5" stop-color="#8a8a8a"/><stop offset="0.62" stop-color="#b8b8b8"/><stop offset="1" stop-color="#a6a6a6"/></linearGradient></defs><path d="M0.100 16.200V9.400c2.600.2 3.800-1.400 4.600-3.600 1-3 3.600-5.200 7-4.200 1.400.4 1.200 2.400-.2 2.600-.8.100-1-.8-1.800-.8-1.200 0-1.600 1.400-1.200 2.600.5 1.600 2.600 3 6.300 3.400v6.800z" fill="url(#lg_tw)"/></svg>
<svg class="i" style="left:7.00px;top:658.00px;" width="16" height="16" viewBox="0 0 16 16"><defs><linearGradient id="lg_sp" x1="0" y1="0" x2="1" y2="0.300"><stop offset="0" stop-color="#4aa820"/><stop offset="0.6" stop-color="#7fd44a"/><stop offset="1" stop-color="#3c8a18"/></linearGradient></defs><path d="M8 8.200L13.600 6.400 16 14.400Q14 16.200 11.400 15.600L8.400 14.200z" fill="url(#lg_sp)" stroke="#2d6e10" stroke-width="0.500"/><path d="M8.800 6.900L12.300 5.800 12.700 7 9.100 8.100z" fill="#d9a520"/><path d="M9.200 3.800Q10.600 2.600 12 3.200L12.400 5.800 9 6.800z" fill="#999" stroke="#555" stroke-width="0.500"/><g fill="#333"><circle cx="4.200" cy="1.800" r=".600"/><circle cx="3.500" cy="4.400" r=".650"/><circle cx="4.700" cy="7.400" r=".650"/><circle cx="6.600" cy="4.600" r=".450"/><circle cx="7.400" cy="6.400" r=".450"/><circle cx="5.800" cy="3" r=".450"/><circle cx="6.400" cy="2.400" r=".350"/></g></svg>
<svg class="i" style="left:7.00px;top:690.50px;" width="16" height="16" viewBox="0 0 16 16"><path d="M0 15.300h4.400M11 15.300h5.400" stroke="#aaa" stroke-width="1.100"/><path d="M8.600 0.800L14.800 4.200 11.400 10.400 5.200 7z" fill="#f4a98a" stroke="#c77" stroke-width="0.400"/><path d="M5.200 7l6.200 3.400-2.600 4.600L2.600 11.600z" fill="#1c1ce8"/></svg>
<svg class="i" style="left:7.00px;top:723.00px;" width="16" height="16" viewBox="0 0 16 16"><path d="M6 2.600h3.600l3.600 3.600v4M6 5.200L2.800 10.600M8.600 6.800v1" fill="none" stroke="#777" stroke-width="0.900"/><g fill="#a8c8ec" stroke="#4a78b0" stroke-width="0.800"><rect x="3.400" y="0.600" width="5" height="4.600"/><rect x="0.500" y="10.800" width="5" height="4.600"/><rect x="10.600" y="10.800" width="5" height="4.600"/></g><rect x="5.600" y="6.600" width="5.600" height="2.400" fill="#fcd34a" stroke="#b8860b" stroke-width="0.500"/></svg>
<div style="left:0.00px;top:746.50px;width:31.00px;height:1.00px;background:#dedbd8;"></div>
<svg class="i" style="left:7.00px;top:755.50px;" width="16" height="16" viewBox="0 0 16 16"><path d="M0.600 3.800L7.400 0.600 14 13 7 16.400z" fill="#f6c3ab" stroke="#333" stroke-width="1"/><path d="M2.400 6.200l1.800-.9M3.600 8.400l1.200-.6M4.800 10.600l1.800-.9M6 12.800l1.200-.6" stroke="#333" stroke-width="0.700"/></svg>
<svg class="i" style="left:7.00px;top:788.00px;" width="16" height="16" viewBox="0 0 16 16"><path d="M9.800 10.200l5 4.400" stroke="#c17d11" stroke-width="3.400" stroke-linecap="round"/><path d="M9.800 10.200l5 4.400" stroke="#fcaf3e" stroke-width="2.200" stroke-linecap="round"/><circle cx="5.900" cy="5.700" r="5.300" fill="#d6e4f2" stroke="#555" stroke-width="1.100"/><path d="M2.600 5a3.600 3.600 0 0 1 3-2.600" stroke="#fff" stroke-width="1" fill="none"/></svg>
<svg class="i" style="left:7.00px;top:820.00px;" width="16" height="16" viewBox="0 0 16 16"><g transform="translate(0.600 0.700) scale(0.930)"><path d="M6.500 0.700h6l3 3v9.200h-9z" fill="url(#lg_doc)" stroke="#111" stroke-width="0.900"/><path d="M12.400 0.800v3h3" fill="#fff" stroke="#111" stroke-width="0.700"/><path d="M1.300 2.600h6l3.200 3.200v9.400H1.300z" fill="url(#lg_doc)" stroke="#000" stroke-width="1.100"/><path d="M7.200 2.700v3.200h3.200" fill="#fff" stroke="#000" stroke-width="0.800"/></g></svg>
<div style="left:52.00px;top:159.00px;width:1871.00px;height:821.00px;background:#fff;"></div>
<div style="left:34.20px;top:132.20px;width:17.80px;height:26.40px;border:1.300px solid #d6d1cc;border-radius:6px;box-sizing:border-box;background:linear-gradient(#f7f6f5,#edebe9);"></div>
<svg class="i" style="left:35.80px;top:138.30px;" width="14" height="14" viewBox="0 0 14 14"><defs><linearGradient id="lg_lk2" x1="0" y1="0" x2="1" y2="1"><stop offset="0" stop-color="#f08414"/><stop offset="0.45" stop-color="#fbcb3a"/><stop offset="1" stop-color="#fff683"/></linearGradient></defs><path d="M2.900 6.400V4.800a4.100 4.100 0 0 1 8.200 0V6.400" fill="none" stroke="#2b2b2b" stroke-width="1.400"/><rect x="0.900" y="5.900" width="12.200" height="8" rx="0.900" fill="url(#lg_lk2)" stroke="#4a4a40" stroke-width="1.200"/><path d="M6 7.800h2l-.3 3.200h-1.400z" fill="#000"/></svg>
<svg class="i" style="left:0;top:0" width="1928" height="1044" viewBox="0 0 1928 1044"><g stroke="#747879" stroke-width="1" fill="none"><path d="M60 158.5v-7.5"/><path d="M69 158.5v-14.0"/><path d="M79 158.5v-7.5"/><path d="M88 158.5v-7.5"/><path d="M98 158.5v-7.5"/><path d="M107 158.5v-7.5"/><path d="M117 158.5v-26.2"/><path d="M126 158.5v-7.5"/><path d="M136 158.5v-7.5"/><path d="M145 158.5v-7.5"/><path d="M155 158.5v-7.5"/><path d="M164 158.5v-14.0"/><path d="M174 158.5v-7.5"/><path d="M183 158.5v-7.5"/><path d="M193 158.5v-7.5"/><path d="M202 158.5v-7.5"/><path d="M212 158.5v-26.2"/><path d="M221 158.5v-7.5"/><path d="M231 158.5v-7.5"/><path d="M240 158.5v-7.5"/><path d="M250 158.5v-7.5"/><path d="M259 158.5v-14.0"/><path d="M269 158.5v-7.5"/><path d="M278 158.5v-7.5"/><path d="M288 158.5v-7.5"/><path d="M297 158.5v-7.5"/><path d="M307 158.5v-26.2"/><path d="M316 158.5v-7.5"/><path d="M326 158.5v-7.5"/><path d="M335 158.5v-7.5"/><path d="M345 158.5v-7.5"/><path d="M354 158.5v-14.0"/><path d="M364 158.5v-7.5"/><path d="M373 158.5v-7.5"/><path d="M383 158.5v-7.5"/><path d="M392 158.5v-7.5"/><path d="M402 158.5v-26.2"/><path d="M411 158.5v-7.5"/><path d="M421 158.5v-7.5"/><path d="M430 158.5v-7.5"/><path d="M440 158.5v-7.5"/><path d="M449 158.5v-14.0"/><path d="M458 158.5v-7.5"/><path d="M468 158.5v-7.5"/><path d="M477 158.5v-7.5"/><path d="M487 158.5v-7.5"/><path d="M496 158.5v-26.2"/><path d="M506 158.5v-7.5"/><path d="M515 158.5v-7.5"/><path d="M525 158.5v-7.5"/><path d="M534 158.5v-7.5"/><path d="M544 158.5v-14.0"/><path d="M553 158.5v-7.5"/><path d="M563 158.5v-7.5"/><path d="M572 158.5v-7.5"/><path d="M582 158.5v-7.5"/><path d="M591 158.5v-26.2"/><path d="M601 158.5v-7.5"/><path d="M610 158.5v-7.5"/><path d="M620 158.5v-7.5"/><path d="M629 158.5v-7.5"/><path d="M639 158.5v-14.0"/><path d="M648 158.5v-7.5"/><path d="M658 158.5v-7.5"/><path d="M667 158.5v-7.5"/><path d="M677 158.5v-7.5"/><path d="M686 158.5v-26.2"/><path d="M696 158.5v-7.5"/><path d="M705 158.5v-7.5"/><path d="M715 158.5v-7.5"/><path d="M724 158.5v-7.5"/><path d="M734 158.5v-14.0"/><path d="M743 158.5v-7.5"/><path d="M753 158.5v-7.5"/><path d="M762 158.5v-7.5"/><path d="M772 158.5v-7.5"/><path d="M781 158.5v-26.2"/><path d="M791 158.5v-7.5"/><path d="M800 158.5v-7.5"/><path d="M810 158.5v-7.5"/><path d="M819 158.5v-7.5"/><path d="M829 158.5v-14.0"/><path d="M838 158.5v-7.5"/><path d="M848 158.5v-7.5"/><path d="M857 158.5v-7.5"/><path d="M866 158.5v-7.5"/><path d="M876 158.5v-26.2"/><path d="M885 158.5v-7.5"/><path d="M895 158.5v-7.5"/><path d="M904 158.5v-7.5"/><path d="M914 158.5v-7.5"/><path d="M923 158.5v-14.0"/><path d="M933 158.5v-7.5"/><path d="M942 158.5v-7.5"/><path d="M952 158.5v-7.5"/><path d="M961 158.5v-7.5"/><path d="M971 158.5v-26.2"/><path d="M980 158.5v-7.5"/><path d="M990 158.5v-7.5"/><path d="M999 158.5v-7.5"/><path d="M1009 158.5v-7.5"/><path d="M1018 158.5v-14.0"/><path d="M1028 158.5v-7.5"/><path d="M1037 158.5v-7.5"/><path d="M1047 158.5v-7.5"/><path d="M1056 158.5v-7.5"/><path d="M1066 158.5v-26.2"/><path d="M1075 158.5v-7.5"/><path d="M1085 158.5v-7.5"/><path d="M1094 158.5v-7.5"/><path d="M1104 158.5v-7.5"/><path d="M1113 158.5v-14.0"/><path d="M1123 158.5v-7.5"/><path d="M1132 158.5v-7.5"/><path d="M1142 158.5v-7.5"/><path d="M1151 158.5v-7.5"/><path d="M1161 158.5v-26.2"/><path d="M1170 158.5v-7.5"/><path d="M1180 158.5v-7.5"/><path d="M1189 158.5v-7.5"/><path d="M1199 158.5v-7.5"/><path d="M1208 158.5v-14.0"/><path d="M1218 158.5v-7.5"/><path d="M1227 158.5v-7.5"/><path d="M1237 158.5v-7.5"/><path d="M1246 158.5v-7.5"/><path d="M1256 158.5v-26.2"/><path d="M1265 158.5v-7.5"/><path d="M1274 158.5v-7.5"/><path d="M1284 158.5v-7.5"/><path d="M1293 158.5v-7.5"/><path d="M1303 158.5v-14.0"/><path d="M1312 158.5v-7.5"/><path d="M1322 158.5v-7.5"/><path d="M1331 158.5v-7.5"/><path d="M1341 158.5v-7.5"/><path d="M1350 158.5v-26.2"/><path d="M1360 158.5v-7.5"/><path d="M1369 158.5v-7.5"/><path d="M1379 158.5v-7.5"/><path d="M1388 158.5v-7.5"/><path d="M1398 158.5v-14.0"/><path d="M1407 158.5v-7.5"/><path d="M1417 158.5v-7.5"/><path d="M1426 158.5v-7.5"/><path d="M1436 158.5v-7.5"/><path d="M1445 158.5v-26.2"/><path d="M1455 158.5v-7.5"/><path d="M1464 158.5v-7.5"/><path d="M1474 158.5v-7.5"/><path d="M1483 158.5v-7.5"/><path d="M1493 158.5v-14.0"/><path d="M1502 158.5v-7.5"/><path d="M1512 158.5v-7.5"/><path d="M1521 158.5v-7.5"/><path d="M1531 158.5v-7.5"/><path d="M1540 158.5v-26.2"/><path d="M1550 158.5v-7.5"/><path d="M1559 158.5v-7.5"/><path d="M1569 158.5v-7.5"/><path d="M1578 158.5v-7.5"/><path d="M1588 158.5v-14.0"/><path d="M1597 158.5v-7.5"/><path d="M1607 158.5v-7.5"/><path d="M1616 158.5v-7.5"/><path d="M1626 158.5v-7.5"/><path d="M1635 158.5v-26.2"/><path d="M1645 158.5v-7.5"/><path d="M1654 158.5v-7.5"/><path d="M1664 158.5v-7.5"/><path d="M1673 158.5v-7.5"/><path d="M1683 158.5v-14.0"/><path d="M1692 158.5v-7.5"/><path d="M1701 158.5v-7.5"/><path d="M1711 158.5v-7.5"/><path d="M1720 158.5v-7.5"/><path d="M1730 158.5v-26.2"/><path d="M1739 158.5v-7.5"/><path d="M1749 158.5v-7.5"/><path d="M1758 158.5v-7.5"/><path d="M1768 158.5v-7.5"/><path d="M1777 158.5v-14.0"/><path d="M1787 158.5v-7.5"/><path d="M1796 158.5v-7.5"/><path d="M1806 158.5v-7.5"/><path d="M1815 158.5v-7.5"/><path d="M1825 158.5v-26.2"/><path d="M1834 158.5v-7.5"/><path d="M1844 158.5v-7.5"/><path d="M1853 158.5v-7.5"/><path d="M1863 158.5v-7.5"/><path d="M1872 158.5v-14.0"/><path d="M1882 158.5v-7.5"/><path d="M1891 158.5v-7.5"/><path d="M1901 158.5v-7.5"/><path d="M1910 158.5v-7.5"/><path d="M1920 158.5v-26.2"/><path d="M51.5 166.5h-9.5"/><path d="M51.5 175.5h-5.0"/><path d="M51.5 184.5h-5.0"/><path d="M51.5 194.5h-5.0"/><path d="M51.5 203.5h-5.0"/><path d="M51.5 213.5h-17.2"/><path d="M51.5 222.5h-5.0"/><path d="M51.5 232.5h-5.0"/><path d="M51.5 241.5h-5.0"/><path d="M51.5 251.5h-5.0"/><path d="M51.5 260.5h-9.5"/><path d="M51.5 270.5h-5.0"/><path d="M51.5 279.5h-5.0"/><path d="M51.5 289.5h-5.0"/><path d="M51.5 298.5h-5.0"/><path d="M51.5 308.5h-17.2"/><path d="M51.5 317.5h-5.0"/><path d="M51.5 327.5h-5.0"/><path d="M51.5 336.5h-5.0"/><path d="M51.5 346.5h-5.0"/><path d="M51.5 355.5h-9.5"/><path d="M51.5 364.5h-5.0"/><path d="M51.5 374.5h-5.0"/><path d="M51.5 383.5h-5.0"/><path d="M51.5 393.5h-5.0"/><path d="M51.5 402.5h-17.2"/><path d="M51.5 412.5h-5.0"/><path d="M51.5 421.5h-5.0"/><path d="M51.5 431.5h-5.0"/><path d="M51.5 440.5h-5.0"/><path d="M51.5 450.5h-9.5"/><path d="M51.5 459.5h-5.0"/><path d="M51.5 469.5h-5.0"/><path d="M51.5 478.5h-5.0"/><path d="M51.5 488.5h-5.0"/><path d="M51.5 497.5h-17.2"/><path d="M51.5 507.5h-5.0"/><path d="M51.5 516.5h-5.0"/><path d="M51.5 525.5h-5.0"/><path d="M51.5 535.5h-5.0"/><path d="M51.5 544.5h-9.5"/><path d="M51.5 554.5h-5.0"/><path d="M51.5 563.5h-5.0"/><path d="M51.5 573.5h-5.0"/><path d="M51.5 582.5h-5.0"/><path d="M51.5 592.5h-17.2"/><path d="M51.5 601.5h-5.0"/><path d="M51.5 611.5h-5.0"/><path d="M51.5 620.5h-5.0"/><path d="M51.5 630.5h-5.0"/><path d="M51.5 639.5h-9.5"/><path d="M51.5 649.5h-5.0"/><path d="M51.5 658.5h-5.0"/><path d="M51.5 668.5h-5.0"/><path d="M51.5 677.5h-5.0"/><path d="M51.5 687.5h-17.2"/><path d="M51.5 696.5h-5.0"/><path d="M51.5 705.5h-5.0"/><path d="M51.5 715.5h-5.0"/><path d="M51.5 724.5h-5.0"/><path d="M51.5 734.5h-9.5"/><path d="M51.5 743.5h-5.0"/><path d="M51.5 753.5h-5.0"/><path d="M51.5 762.5h-5.0"/><path d="M51.5 772.5h-5.0"/><path d="M51.5 781.5h-17.2"/><path d="M51.5 791.5h-5.0"/><path d="M51.5 800.5h-5.0"/><path d="M51.5 810.5h-5.0"/><path d="M51.5 819.5h-5.0"/><path d="M51.5 829.5h-9.5"/><path d="M51.5 838.5h-5.0"/><path d="M51.5 848.5h-5.0"/><path d="M51.5 857.5h-5.0"/><path d="M51.5 866.5h-5.0"/><path d="M51.5 876.5h-17.2"/><path d="M51.5 885.5h-5.0"/><path d="M51.5 895.5h-5.0"/><path d="M51.5 904.5h-5.0"/><path d="M51.5 914.5h-5.0"/><path d="M51.5 923.5h-9.5"/><path d="M51.5 933.5h-5.0"/><path d="M51.5 942.5h-5.0"/><path d="M51.5 952.5h-5.0"/><path d="M51.5 961.5h-5.0"/><path d="M51.5 971.5h-17.2"/><path d="M51 158.300H1922.5" stroke="#909394" stroke-width="1.600"/><path d="M51.600 158V980" stroke="#8e9192" stroke-width="1.300"/></g><path d="M972.4 153.6H981.6L977 158.6z" fill="#7f8384"/><path d="M47 324V334L52 329z" fill="#7f8384"/></svg>
<span class="t" id="t21" style="left:121.20px;top:131.90px;font-size:10.4px;line-height:16px;height:16px;color:#a0a2a2;transform:scaleX(0.8562);">1450</span>
<span class="t" id="t22" style="left:216.09px;top:131.90px;font-size:10.4px;line-height:16px;height:16px;color:#a0a2a2;transform:scaleX(0.8562);">1475</span>
<span class="t" id="t23" style="left:310.97px;top:131.90px;font-size:10.4px;line-height:16px;height:16px;color:#a0a2a2;transform:scaleX(0.8562);">1500</span>
<span class="t" id="t24" style="left:405.86px;top:131.90px;font-size:10.4px;line-height:16px;height:16px;color:#a0a2a2;transform:scaleX(0.8562);">1525</span>
<span class="t" id="t25" style="left:500.74px;top:131.90px;font-size:10.4px;line-height:16px;height:16px;color:#a0a2a2;transform:scaleX(0.8562);">1550</span>
<span class="t" id="t26" style="left:595.62px;top:131.90px;font-size:10.4px;line-height:16px;height:16px;color:#a0a2a2;transform:scaleX(0.8562);">1575</span>
<span class="t" id="t27" style="left:690.51px;top:131.90px;font-size:10.4px;line-height:16px;height:16px;color:#a0a2a2;transform:scaleX(0.8562);">1600</span>
<span class="t" id="t28" style="left:785.39px;top:131.90px;font-size:10.4px;line-height:16px;height:16px;color:#a0a2a2;transform:scaleX(0.8562);">1625</span>
<span class="t" id="t29" style="left:880.28px;top:131.90px;font-size:10.4px;line-height:16px;height:16px;color:#a0a2a2;transform:scaleX(0.8562);">1650</span>
<span class="t" id="t30" style="left:975.16px;top:131.90px;font-size:10.4px;line-height:16px;height:16px;color:#a0a2a2;transform:scaleX(0.8562);">1675</span>
<span class="t" id="t31" style="left:1070.05px;top:131.90px;font-size:10.4px;line-height:16px;height:16px;color:#a0a2a2;transform:scaleX(0.8562);">1700</span>
<span class="t" id="t32" style="left:1164.94px;top:131.90px;font-size:10.4px;line-height:16px;height:16px;color:#a0a2a2;transform:scaleX(0.8562);">1725</span>
<span class="t" id="t33" style="left:1259.82px;top:131.90px;font-size:10.4px;line-height:16px;height:16px;color:#a0a2a2;transform:scaleX(0.8562);">1750</span>
<span class="t" id="t34" style="left:1354.71px;top:131.90px;font-size:10.4px;line-height:16px;height:16px;color:#a0a2a2;transform:scaleX(0.8562);">1775</span>
<span class="t" id="t35" style="left:1449.59px;top:131.90px;font-size:10.4px;line-height:16px;height:16px;color:#a0a2a2;transform:scaleX(0.8562);">1800</span>
<span class="t" id="t36" style="left:1544.48px;top:131.90px;font-size:10.4px;line-height:16px;height:16px;color:#a0a2a2;transform:scaleX(0.8562);">1825</span>
<span class="t" id="t37" style="left:1639.36px;top:131.90px;font-size:10.4px;line-height:16px;height:16px;color:#a0a2a2;transform:scaleX(0.8562);">1850</span>
<span class="t" id="t38" style="left:1734.25px;top:131.90px;font-size:10.4px;line-height:16px;height:16px;color:#a0a2a2;transform:scaleX(0.8562);">1875</span>
<span class="t" id="t39" style="left:1829.13px;top:131.90px;font-size:10.4px;line-height:16px;height:16px;color:#a0a2a2;transform:scaleX(0.8562);">1900</span>
<span class="t" id="t40" style="left:39.40px;top:213.40px;font-size:10.2px;line-height:16px;height:16px;color:#a0a2a2;transform:scaleX(0.8639);">3</span>
<span class="t" id="t41" style="left:39.40px;top:224.80px;font-size:10.2px;line-height:16px;height:16px;color:#a0a2a2;transform:scaleX(0.8639);">0</span>
<span class="t" id="t42" style="left:39.40px;top:236.20px;font-size:10.2px;line-height:16px;height:16px;color:#a0a2a2;transform:scaleX(0.8639);">2</span>
<span class="t" id="t43" style="left:39.40px;top:247.60px;font-size:10.2px;line-height:16px;height:16px;color:#a0a2a2;transform:scaleX(0.8639);">5</span>
<span class="t" id="t44" style="left:39.40px;top:308.12px;font-size:10.2px;line-height:16px;height:16px;color:#a0a2a2;transform:scaleX(0.8639);">3</span>
<span class="t" id="t45" style="left:39.40px;top:319.52px;font-size:10.2px;line-height:16px;height:16px;color:#a0a2a2;transform:scaleX(0.8639);">0</span>
<span class="t" id="t46" style="left:39.40px;top:330.92px;font-size:10.2px;line-height:16px;height:16px;color:#a0a2a2;transform:scaleX(0.8639);">5</span>
<span class="t" id="t47" style="left:39.40px;top:342.32px;font-size:10.2px;line-height:16px;height:16px;color:#a0a2a2;transform:scaleX(0.8639);">0</span>
<span class="t" id="t48" style="left:39.40px;top:402.84px;font-size:10.2px;line-height:16px;height:16px;color:#a0a2a2;transform:scaleX(0.8639);">3</span>
<span class="t" id="t49" style="left:39.40px;top:414.24px;font-size:10.2px;line-height:16px;height:16px;color:#a0a2a2;transform:scaleX(0.8639);">0</span>
<span class="t" id="t50" style="left:39.40px;top:425.64px;font-size:10.2px;line-height:16px;height:16px;color:#a0a2a2;transform:scaleX(0.8639);">7</span>
<span class="t" id="t51" style="left:39.40px;top:437.04px;font-size:10.2px;line-height:16px;height:16px;color:#a0a2a2;transform:scaleX(0.8639);">5</span>
<span class="t" id="t52" style="left:39.40px;top:497.56px;font-size:10.2px;line-height:16px;height:16px;color:#a0a2a2;transform:scaleX(0.8639);">3</span>
<span class="t" id="t53" style="left:39.40px;top:508.96px;font-size:10.2px;line-height:16px;height:16px;color:#a0a2a2;transform:scaleX(0.8639);">1</span>
<span class="t" id="t54" style="left:39.40px;top:520.36px;font-size:10.2px;line-height:16px;height:16px;color:#a0a2a2;transform:scaleX(0.8639);">0</span>
<span class="t" id="t55" style="left:39.40px;top:531.76px;font-size:10.2px;line-height:16px;height:16px;color:#a0a2a2;transform:scaleX(0.8639);">0</span>
<span class="t" id="t56" style="left:39.40px;top:592.28px;font-size:10.2px;line-height:16px;height:16px;color:#a0a2a2;transform:scaleX(0.8639);">3</span>
<span class="t" id="t57" style="left:39.40px;top:603.68px;font-size:10.2px;line-height:16px;height:16px;color:#a0a2a2;transform:scaleX(0.8639);">1</span>
<span class="t" id="t58" style="left:39.40px;top:615.08px;font-size:10.2px;line-height:16px;height:16px;color:#a0a2a2;transform:scaleX(0.8639);">2</span>
<span class="t" id="t59" style="left:39.40px;top:626.48px;font-size:10.2px;line-height:16px;height:16px;color:#a0a2a2;transform:scaleX(0.8639);">5</span>
<span class="t" id="t60" style="left:39.40px;top:687.00px;font-size:10.2px;line-height:16px;height:16px;color:#a0a2a2;transform:scaleX(0.8639);">3</span>
<span class="t" id="t61" style="left:39.40px;top:698.40px;font-size:10.2px;line-height:16px;height:16px;color:#a0a2a2;transform:scaleX(0.8639);">1</span>
<span class="t" id="t62" style="left:39.40px;top:709.80px;font-size:10.2px;line-height:16px;height:16px;color:#a0a2a2;transform:scaleX(0.8639);">5</span>
<span class="t" id="t63" style="left:39.40px;top:721.20px;font-size:10.2px;line-height:16px;height:16px;color:#a0a2a2;transform:scaleX(0.8639);">0</span>
<span class="t" id="t64" style="left:39.40px;top:781.72px;font-size:10.2px;line-height:16px;height:16px;color:#a0a2a2;transform:scaleX(0.8639);">3</span>
<span class="t" id="t65" style="left:39.40px;top:793.12px;font-size:10.2px;line-height:16px;height:16px;color:#a0a2a2;transform:scaleX(0.8639);">1</span>
<span class="t" id="t66" style="left:39.40px;top:804.52px;font-size:10.2px;line-height:16px;height:16px;color:#a0a2a2;transform:scaleX(0.8639);">7</span>
<span class="t" id="t67" style="left:39.40px;top:815.92px;font-size:10.2px;line-height:16px;height:16px;color:#a0a2a2;transform:scaleX(0.8639);">5</span>
<span class="t" id="t68" style="left:39.40px;top:876.44px;font-size:10.2px;line-height:16px;height:16px;color:#a0a2a2;transform:scaleX(0.8639);">3</span>
<span class="t" id="t69" style="left:39.40px;top:887.84px;font-size:10.2px;line-height:16px;height:16px;color:#a0a2a2;transform:scaleX(0.8639);">2</span>
<span class="t" id="t70" style="left:39.40px;top:899.24px;font-size:10.2px;line-height:16px;height:16px;color:#a0a2a2;transform:scaleX(0.8639);">0</span>
<span class="t" id="t71" style="left:39.40px;top:910.64px;font-size:10.2px;line-height:16px;height:16px;color:#a0a2a2;transform:scaleX(0.8639);">0</span>
<span class="t" id="t72" style="left:39.40px;top:971.16px;font-size:10.2px;line-height:16px;height:16px;color:#a0a2a2;transform:scaleX(0.8639);">3</span>
<div style="left:0.00px;top:980.00px;width:1928.00px;height:12.00px;background:#f6f5f4;"></div>
<svg class="i" style="left:0;top:0" width="1928" height="1044" viewBox="0 0 1928 1044"><g fill="none" stroke="#333" stroke-width="3.5" stroke-linecap="round" stroke-linejoin="round"><path fill="#f55" d="M812 476C800 455 782 445 766 445C730 445 692.400 489 692.400 545C692.400 610 742 653 769 653C787 653 798 645 804 629C808 648 818 657.400 836 657.400C872 657.400 926 612 926 537C926 492 898 454 862 454C840 454 822 462 812 476Z"/><path d="M825.2 425.4C817 444 812 462 812 476V493.5"/><path d="M777.1 484.600C790 492.400 800 495.200 812 495.200C826 495.200 838 494 845.1 490.600"/></g></svg>
<div style="left:1.00px;top:992.00px;width:16.00px;height:16.00px;background:#fff;"></div>
<svg class="i" style="left:1px;top:992px" width="16" height="16" viewBox="0 0 16 16"><path d="M0.3 0.3l15.4 15.4M15.7 0.3L0.3 15.7" stroke="#7a0c0c" stroke-width="1.6" fill="none"/></svg>
<div style="left:18.20px;top:992.00px;width:16.07px;height:16.00px;background:#000000;"></div>
<div style="left:35.27px;top:992.00px;width:16.07px;height:16.00px;background:#1a1a1a;"></div>
<div style="left:52.34px;top:992.00px;width:16.07px;height:16.00px;background:#333333;"></div>
<div style="left:69.41px;top:992.00px;width:16.07px;height:16.00px;background:#4d4d4d;"></div>
<div style="left:86.48px;top:992.00px;width:16.07px;height:16.00px;background:#666666;"></div>
<div style="left:103.55px;top:992.00px;width:16.07px;height:16.00px;background:#808080;"></div>
<div style="left:120.61px;top:992.00px;width:16.07px;height:16.00px;background:#999999;"></div>
<div style="left:137.68px;top:992.00px;width:16.07px;height:16.00px;background:#b3b3b3;"></div>
<div style="left:154.75px;top:992.00px;width:16.07px;height:16.00px;background:#cccccc;"></div>
<div style="left:171.82px;top:992.00px;width:16.07px;height:16.00px;background:#e6e6e6;"></div>
<div style="left:188.89px;top:992.00px;width:16.07px;height:16.00px;background:#ececec;"></div>
<div style="left:205.96px;top:992.00px;width:16.07px;height:16.00px;background:#f2f2f2;"></div>
<div style="left:223.03px;top:992.00px;width:16.07px;height:16.00px;background:#f9f9f9;"></div>
<div style="left:240.10px;top:992.00px;width:16.07px;height:16.00px;background:#ffffff;"></div>
<div style="left:257.17px;top:992.00px;width:16.07px;height:16.00px;background:#800000;"></div>
<div style="left:274.24px;top:992.00px;width:16.07px;height:16.00px;background:#ff0000;"></div>
<div style="left:291.31px;top:992.00px;width:16.07px;height:16.00px;background:#808000;"></div>
<div style="left:308.38px;top:992.00px;width:16.07px;height:16.00px;background:#ffff00;"></div>
<div style="left:325.44px;top:992.00px;width:16.07px;height:16.00px;background:#008000;"></div>
<div style="left:342.51px;top:992.00px;width:16.07px;height:16.00px;background:#00ff00;"></div>
<div style="left:359.58px;top:992.00px;width:16.07px;height:16.00px;background:#008080;"></div>
<div style="left:376.65px;top:992.00px;width:16.07px;height:16.00px;background:#00ffff;"></div>
<div style="left:393.72px;top:992.00px;width:16.07px;height:16.00px;background:#000080;"></div>
<div style="left:410.79px;top:992.00px;width:16.07px;height:16.00px;background:#0000ff;"></div>
<div style="left:427.86px;top:992.00px;width:16.07px;height:16.00px;background:#800080;"></div>
<div style="left:444.93px;top:992.00px;width:16.07px;height:16.00px;background:#ff00ff;"></div>
<div style="left:462.00px;top:992.00px;width:16.07px;height:16.00px;background:#2b0000;"></div>
<div style="left:479.07px;top:992.00px;width:16.07px;height:16.00px;background:#550000;"></div>
<div style="left:496.14px;top:992.00px;width:16.07px;height:16.00px;background:#800000;"></div>
<div style="left:513.21px;top:992.00px;width:16.07px;height:16.00px;background:#aa0000;"></div>
<div style="left:530.27px;top:992.00px;width:16.07px;height:16.00px;background:#d40000;"></div>
<div style="left:547.34px;top:992.00px;width:16.07px;height:16.00px;background:#ff0000;"></div>
<div style="left:564.41px;top:992.00px;width:16.07px;height:16.00px;background:#ff2a2a;"></div>
<div style="left:581.48px;top:992.00px;width:16.07px;height:16.00px;background:#ff5555;"></div>
<div style="left:598.55px;top:992.00px;width:16.07px;height:16.00px;background:#ff8080;"></div>
<div style="left:615.62px;top:992.00px;width:16.07px;height:16.00px;background:#ffaaaa;"></div>
<div style="left:632.69px;top:992.00px;width:16.07px;height:16.00px;background:#ffd5d5;"></div>
<div style="left:649.76px;top:992.00px;width:16.07px;height:16.00px;background:#280b0b;"></div>
<div style="left:666.83px;top:992.00px;width:16.07px;height:16.00px;background:#501616;"></div>
<div style="left:683.90px;top:992.00px;width:16.07px;height:16.00px;background:#782121;"></div>
<div style="left:700.97px;top:992.00px;width:16.07px;height:16.00px;background:#a02c2c;"></div>
<div style="left:718.04px;top:992.00px;width:16.07px;height:16.00px;background:#c83737;"></div>
<div style="left:735.10px;top:992.00px;width:16.07px;height:16.00px;background:#d35f5f;"></div>
<div style="left:752.17px;top:992.00px;width:16.07px;height:16.00px;background:#de8787;"></div>
<div style="left:769.24px;top:992.00px;width:16.07px;height:16.00px;background:#e9afaf;"></div>
<div style="left:786.31px;top:992.00px;width:16.07px;height:16.00px;background:#f4d7d7;"></div>
<div style="left:803.38px;top:992.00px;width:16.07px;height:16.00px;background:#241c1c;"></div>
<div style="left:820.45px;top:992.00px;width:16.07px;height:16.00px;background:#483737;"></div>
<div style="left:837.52px;top:992.00px;width:16.07px;height:16.00px;background:#6c5353;"></div>
<div style="left:854.59px;top:992.00px;width:16.07px;height:16.00px;background:#916f6f;"></div>
<div style="left:871.66px;top:992.00px;width:16.07px;height:16.00px;background:#ac9393;"></div>
<div style="left:888.73px;top:992.00px;width:16.07px;height:16.00px;background:#c8b7b7;"></div>
<div style="left:905.80px;top:992.00px;width:16.07px;height:16.00px;background:#e3dbdb;"></div>
<div style="left:922.87px;top:992.00px;width:16.07px;height:16.00px;background:#2b1100;"></div>
<div style="left:939.93px;top:992.00px;width:16.07px;height:16.00px;background:#552200;"></div>
<div style="left:957.00px;top:992.00px;width:16.07px;height:16.00px;background:#803300;"></div>
<div style="left:974.07px;top:992.00px;width:16.07px;height:16.00px;background:#aa4400;"></div>
<div style="left:991.14px;top:992.00px;width:16.07px;height:16.00px;background:#d45500;"></div>
<div style="left:1008.21px;top:992.00px;width:16.07px;height:16.00px;background:#ff6600;"></div>
<div style="left:1025.28px;top:992.00px;width:16.07px;height:16.00px;background:#ff7f2a;"></div>
<div style="left:1042.35px;top:992.00px;width:16.07px;height:16.00px;background:#ff9955;"></div>
<div style="left:1059.42px;top:992.00px;width:16.07px;height:16.00px;background:#ffb380;"></div>
<div style="left:1076.49px;top:992.00px;width:16.07px;height:16.00px;background:#ffccaa;"></div>
<div style="left:1093.56px;top:992.00px;width:16.07px;height:16.00px;background:#ffe6d5;"></div>
<div style="left:1110.63px;top:992.00px;width:16.07px;height:16.00px;background:#28170b;"></div>
<div style="left:1127.70px;top:992.00px;width:16.07px;height:16.00px;background:#502d16;"></div>
<div style="left:1144.76px;top:992.00px;width:16.07px;height:16.00px;background:#784421;"></div>
<div style="left:1161.83px;top:992.00px;width:16.07px;height:16.00px;background:#a05a2c;"></div>
<div style="left:1178.90px;top:992.00px;width:16.07px;height:16.00px;background:#c87137;"></div>
<div style="left:1195.97px;top:992.00px;width:16.07px;height:16.00px;background:#d38d5f;"></div>
<div style="left:1213.04px;top:992.00px;width:16.07px;height:16.00px;background:#deaa87;"></div>
<div style="left:1230.11px;top:992.00px;width:16.07px;height:16.00px;background:#e9c6af;"></div>
<div style="left:1247.18px;top:992.00px;width:16.07px;height:16.00px;background:#f4e3d7;"></div>
<div style="left:1264.25px;top:992.00px;width:16.07px;height:16.00px;background:#241f1c;"></div>
<div style="left:1281.32px;top:992.00px;width:16.07px;height:16.00px;background:#483e37;"></div>
<div style="left:1298.39px;top:992.00px;width:16.07px;height:16.00px;background:#6c5d53;"></div>
<div style="left:1315.46px;top:992.00px;width:16.07px;height:16.00px;background:#917c6f;"></div>
<div style="left:1332.53px;top:992.00px;width:16.07px;height:16.00px;background:#ac9d93;"></div>
<div style="left:1349.59px;top:992.00px;width:16.07px;height:16.00px;background:#c8beb7;"></div>
<div style="left:1366.66px;top:992.00px;width:16.07px;height:16.00px;background:#e3dedb;"></div>
<div style="left:1383.73px;top:992.00px;width:16.07px;height:16.00px;background:#2b2200;"></div>
<div style="left:1400.80px;top:992.00px;width:16.07px;height:16.00px;background:#554400;"></div>
<div style="left:1417.87px;top:992.00px;width:16.07px;height:16.00px;background:#806600;"></div>
<div style="left:1434.94px;top:992.00px;width:16.07px;height:16.00px;background:#aa8800;"></div>
<div style="left:1452.01px;top:992.00px;width:16.07px;height:16.00px;background:#d4aa00;"></div>
<div style="left:1469.08px;top:992.00px;width:16.07px;height:16.00px;background:#ffcc00;"></div>
<div style="left:1486.15px;top:992.00px;width:16.07px;height:16.00px;background:#ffd42a;"></div>
<div style="left:1503.22px;top:992.00px;width:16.07px;height:16.00px;background:#ffdd55;"></div>
<div style="left:1520.29px;top:992.00px;width:16.07px;height:16.00px;background:#ffe680;"></div>
<div style="left:1537.36px;top:992.00px;width:16.07px;height:16.00px;background:#ffeeaa;"></div>
<div style="left:1554.42px;top:992.00px;width:16.07px;height:16.00px;background:#fff6d5;"></div>
<div style="left:1571.49px;top:992.00px;width:16.07px;height:16.00px;background:#28220b;"></div>
<div style="left:1588.56px;top:992.00px;width:16.07px;height:16.00px;background:#504416;"></div>
<div style="left:1605.63px;top:992.00px;width:16.07px;height:16.00px;background:#786721;"></div>
<div style="left:1622.70px;top:992.00px;width:16.07px;height:16.00px;background:#a0892c;"></div>
<div style="left:1639.77px;top:992.00px;width:16.07px;height:16.00px;background:#c8ab37;"></div>
<div style="left:1656.84px;top:992.00px;width:16.07px;height:16.00px;background:#d3bc5f;"></div>
<div style="left:1673.91px;top:992.00px;width:16.07px;height:16.00px;background:#decd87;"></div>
<div style="left:1690.98px;top:992.00px;width:16.07px;height:16.00px;background:#e9ddaf;"></div>
<div style="left:1708.05px;top:992.00px;width:16.07px;height:16.00px;background:#f4eed7;"></div>
<div style="left:1725.12px;top:992.00px;width:16.07px;height:16.00px;background:#24221c;"></div>
<div style="left:1742.19px;top:992.00px;width:16.07px;height:16.00px;background:#484537;"></div>
<div style="left:1759.25px;top:992.00px;width:16.07px;height:16.00px;background:#6c6753;"></div>
<div style="left:1776.32px;top:992.00px;width:16.07px;height:16.00px;background:#918a6f;"></div>
<div style="left:1793.39px;top:992.00px;width:16.07px;height:16.00px;background:#aca793;"></div>
<div style="left:1810.46px;top:992.00px;width:16.07px;height:16.00px;background:#c8c4b7;"></div>
<div style="left:1827.53px;top:992.00px;width:16.07px;height:16.00px;background:#e3e2db;"></div>
<svg class="i" style="left:1850px;top:986px" width="52" height="18" viewBox="0 0 52 18"><g fill="none" stroke="#2e3436" stroke-width="2" stroke-linecap="round"><path d="M3 12.400l6.900-7 6.900 7"/><path d="M34.100 5.400l6.900 7 6.900-7"/></g></svg>
<div style="left:1907.10px;top:981.30px;width:19.40px;height:27.30px;border:1px solid #cdc7c2;border-radius:5px;box-sizing:border-box;background:linear-gradient(#f7f6f5,#edebe9);box-shadow:0 1px 2px rgba(0,0,0,.08);"></div>
<div style="left:1910.00px;top:989.00px;width:14.00px;height:2.00px;background:#2e3436;"></div>
<div style="left:1910.00px;top:994.00px;width:14.00px;height:2.00px;background:#2e3436;"></div>
<div style="left:1910.00px;top:999.00px;width:14.00px;height:2.00px;background:#2e3436;"></div>
<span class="t" id="t73" style="left:20.50px;top:1009.60px;font-size:12px;line-height:18px;height:18px;color:#2e3436;transform:scaleX(0.6929);">フィル:</span>
<span class="t" id="t74" style="left:1.90px;top:1026.80px;font-size:12px;line-height:18px;height:18px;color:#2e3436;transform:scaleX(0.7215);">ストローク:</span>
<span class="t" id="t75" style="left:69.00px;top:1009.60px;font-size:12px;line-height:18px;height:18px;color:#2e3436;transform:scaleX(0.8622);">該当なし</span>
<span class="t" id="t76" style="left:69.00px;top:1026.80px;font-size:12px;line-height:18px;height:18px;color:#2e3436;transform:scaleX(0.8622);">該当なし</span>
<span class="t" id="t77" style="left:158.70px;top:1017.50px;font-size:12px;line-height:18px;height:18px;color:#2e3436;transform:scaleX(0.9154);">O:</span>
<div style="left:173.20px;top:1010.00px;width:71.70px;height:34.00px;border:1px solid #d5d0cc;border-radius:5px;box-sizing:border-box;background:#faf9f8;"></div>
<div style="left:209.80px;top:1011.00px;width:1.00px;height:32.00px;background:#e3e0dd;"></div>
<div style="left:226.90px;top:1011.00px;width:1.00px;height:32.00px;background:#e3e0dd;"></div>
<div style="left:211.85px;top:1026.50px;width:14.00px;height:1.00px;background:#c3c4c3;"></div>
<div style="left:229.15px;top:1026.50px;width:14.00px;height:1.00px;background:#c3c4c3;"></div>
<div style="left:235.65px;top:1020.00px;width:1.00px;height:14.00px;background:#c3c4c3;"></div>
<span class="t" id="t78" style="left:180.50px;top:1017.50px;font-size:12px;line-height:18px;height:18px;color:#b4b5b4;transform:scaleX(0.8886);">100</span>
<div style="left:261.80px;top:1018.20px;width:3.20px;height:16.40px;background:#729fcf;"></div>
<span class="t" id="t79" style="left:272.00px;top:1017.50px;font-size:12px;line-height:18px;height:18px;color:#2e3436;transform:scaleX(0.9898);">黄(yellow)</span>
<svg class="i" style="left:345.50px;top:1017.50px;" width="16" height="16" viewBox="0 0 16 16"><g fill="none" stroke="#333" stroke-width="1.1"><path d="M0.3 9.6Q8 2.6 15.8 9.6Q8 17.600 0.3 9.6Z" fill="#fff" stroke-width="1.3"/><path d="M8 5.8V1.4M5.2 6.4L4 2.6M11 6.4l1.2-3.6M3 7.6L0.6 5.4M13.2 7.6l2.2-2.2" stroke-width="1.2"/></g><circle cx="8.1" cy="9.4" r="3.1" fill="#000"/><circle cx="7" cy="8" r="0.9" fill="#ddd"/></svg>
<svg class="i" style="left:381.70px;top:1018.80px;" width="16" height="16" viewBox="0 0 16 16"><defs><linearGradient id="lg_lk" x1="0" y1="0" x2="1" y2="1"><stop offset="0" stop-color="#fff"/><stop offset="0.45" stop-color="#fdf6b0"/><stop offset="1" stop-color="#e8c430"/></linearGradient></defs><path d="M3.800 2.300C6 0 9.800 0.600 11 4.400l0.400 2" fill="none" stroke="#222" stroke-width="1.3"/><path d="M1.500 8.400L12.500 6.300l2 8.200L3.200 16.600z" fill="url(#lg_lk)" stroke="#222" stroke-width="1"/><path d="M7.100 9.600a1.2 1.2 0 0 1 2 .9l.4 2.2-1.4.2-.4-2a1.2 1.2 0 0 1-.6-1.3z" fill="#000"/></svg>
<div style="left:407.90px;top:1016.00px;width:1.00px;height:22.00px;background:#dedbd8;"></div>
<span class="t" id="t80" style="left:415.80px;top:1017.50px;font-size:12px;line-height:18px;height:18px;color:#2e3436;font-weight:bold;transform:scaleX(0.8700);">Alt:</span>
<span class="t" id="t81" style="left:437.30px;top:1017.50px;font-size:12px;line-height:18px;height:18px;color:#2e3436;transform:scaleX(0.8003);">パスをタッチして選択, オブジェクトを順に選択, 強制ドラッグ</span>
<div style="left:1623.30px;top:1010.00px;width:1.00px;height:34.00px;background:#dedbd8;"></div>
<span class="t" id="t82" style="left:1633.70px;top:1009.80px;font-size:12px;line-height:18px;height:18px;color:#2e3436;transform:scaleX(0.8375);">X:</span>
<span class="t" id="t83" style="left:1655.00px;top:1009.80px;font-size:12px;line-height:18px;height:18px;color:#2e3436;transform:scaleX(0.8758);">1676.66</span>
<span class="t" id="t84" style="left:1633.70px;top:1026.60px;font-size:12px;line-height:18px;height:18px;color:#2e3436;transform:scaleX(0.8234);">Y:</span>
<span class="t" id="t85" style="left:1655.00px;top:1026.60px;font-size:12px;line-height:18px;height:18px;color:#2e3436;transform:scaleX(0.8758);">3055.67</span>
<span class="t" id="t86" style="left:1703.00px;top:1017.50px;font-size:12px;line-height:18px;height:18px;color:#2e3436;transform:scaleX(0.8433);">Z:</span>
<div style="left:1713.40px;top:1010.00px;width:87.40px;height:33.80px;border:1px solid #cdc7c2;border-radius:5px;box-sizing:border-box;background:#fff;"></div>
<div style="left:1756.00px;top:1011.00px;width:1.00px;height:31.80px;background:#e6e3e0;"></div>
<div style="left:1777.10px;top:1011.00px;width:1.00px;height:31.80px;background:#e6e3e0;"></div>
<div style="left:1760.05px;top:1026.10px;width:14.00px;height:1.60px;background:#2e3436;"></div>
<div style="left:1782.20px;top:1026.10px;width:14.00px;height:1.60px;background:#2e3436;"></div>
<div style="left:1788.40px;top:1019.90px;width:1.60px;height:14.00px;background:#2e3436;"></div>
<span class="t" id="t87" style="left:1721.70px;top:1017.50px;font-size:12px;line-height:18px;height:18px;color:#2e3436;transform:scaleX(0.8892);">100%</span>
<span class="t" id="t88" style="left:1811.80px;top:1017.50px;font-size:12px;line-height:18px;height:18px;color:#2e3436;transform:scaleX(0.7500);">R:</span>
<div style="left:1821.70px;top:1010.00px;width:94.20px;height:33.80px;border:1px solid #cdc7c2;border-radius:5px;box-sizing:border-box;background:#fff;"></div>
<div style="left:1870.50px;top:1011.00px;width:1.00px;height:31.80px;background:#e6e3e0;"></div>
<div style="left:1891.50px;top:1011.00px;width:1.00px;height:31.80px;background:#e6e3e0;"></div>
<div style="left:1874.50px;top:1026.10px;width:14.00px;height:1.60px;background:#2e3436;"></div>
<div style="left:1896.95px;top:1026.10px;width:14.00px;height:1.60px;background:#2e3436;"></div>
<div style="left:1903.15px;top:1019.90px;width:1.60px;height:14.00px;background:#2e3436;"></div>
<span class="t" id="t89" style="left:1835.40px;top:1017.50px;font-size:12px;line-height:18px;height:18px;color:#2e3436;transform:scaleX(0.9092);">0.00°</span>
</body></html>
